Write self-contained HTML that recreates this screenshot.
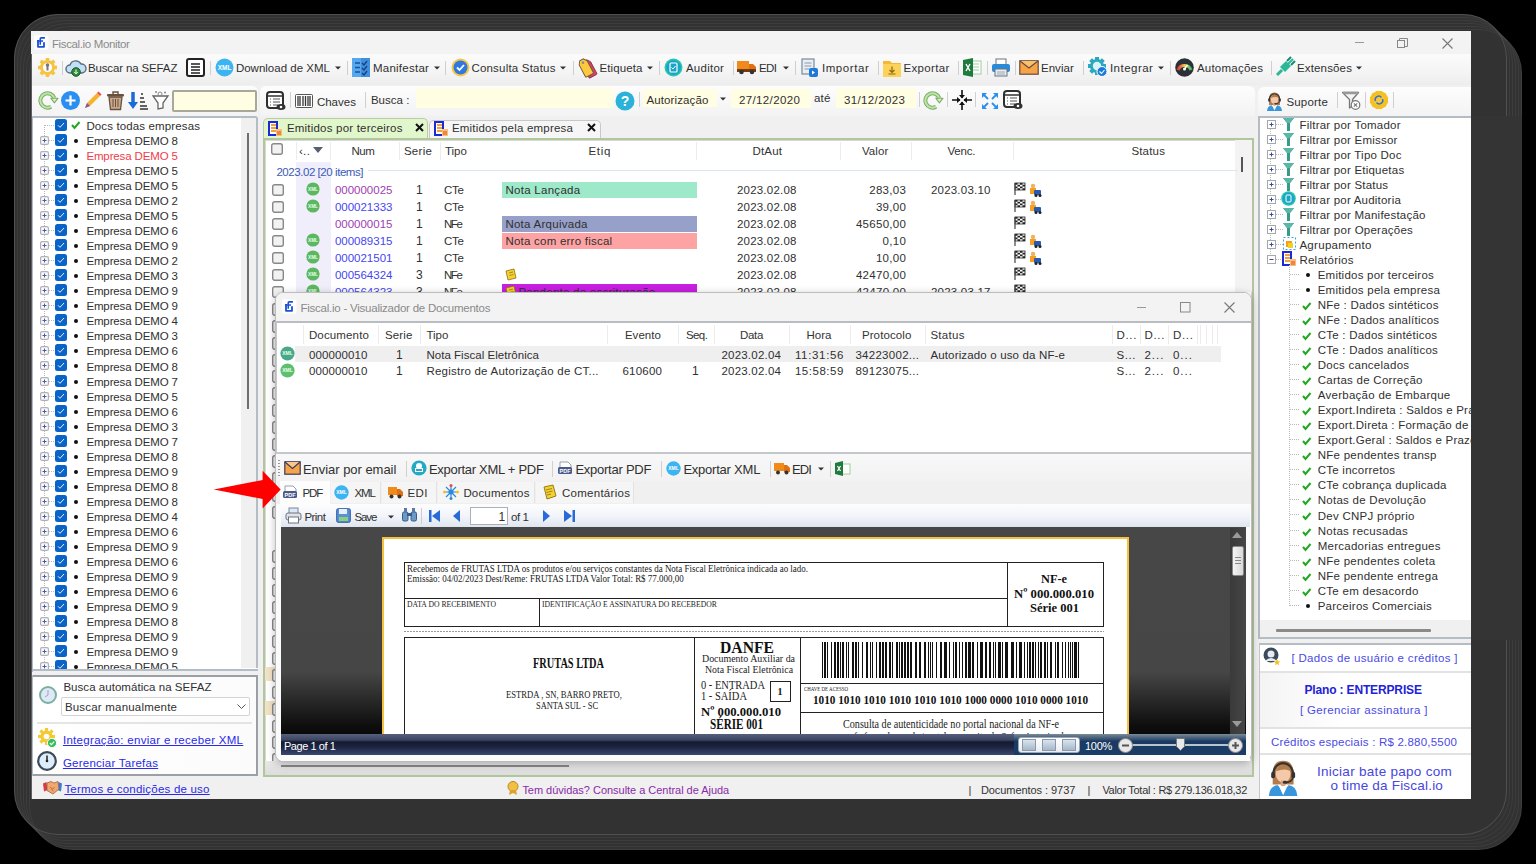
<!DOCTYPE html><html><head><meta charset="utf-8"><style>
*{margin:0;padding:0;box-sizing:border-box}
html,body{width:1536px;height:864px;overflow:hidden;background:#000}
body{position:relative;font-family:"Liberation Sans",sans-serif;font-size:12px;color:#1e1e1e}
.a{position:absolute}
.t{position:absolute;white-space:nowrap}
svg{position:absolute;overflow:visible}
</style></head><body>
<div class="a" style="left:14px;top:14px;width:1493px;height:821px;background:#323232;border-radius:44px"></div>
<div class="a" style="left:17px;top:17px;width:1493px;height:821px;background:#323232;border-radius:44px"></div>
<div class="a" style="left:20px;top:20px;width:1493px;height:821px;background:#323232;border-radius:44px"></div>
<div class="a" style="left:23px;top:23px;width:1493px;height:821px;background:#323232;border-radius:44px"></div>
<div class="a" style="left:26px;top:26px;width:1493px;height:821px;background:#323232;border-radius:44px"></div>
<div class="a" style="left:29px;top:29px;width:1493px;height:821px;background:#323232;border-radius:44px"></div>
<div class="a" style="left:14px;top:14px;width:1493px;height:821px;border:1px solid rgba(110,110,110,.5);border-radius:44px"></div>
<div class="a" style="left:17px;top:17px;width:1493px;height:821px;border:1px solid rgba(90,90,90,.28);border-radius:44px"></div>
<div class="a" style="left:20px;top:20px;width:1493px;height:821px;border:1px solid rgba(90,90,90,.28);border-radius:44px"></div>
<div class="a" style="left:23px;top:23px;width:1493px;height:821px;border:1px solid rgba(90,90,90,.28);border-radius:44px"></div>
<div class="a" style="left:26px;top:26px;width:1493px;height:821px;border:1px solid rgba(90,90,90,.28);border-radius:44px"></div>
<div class="a" style="left:29px;top:29px;width:1493px;height:821px;border:1px solid rgba(90,90,90,.28);border-radius:44px"></div>
<div class="a" style="left:31px;top:31px;width:1440px;height:768px;background:#f0f0f0"></div>
<div class="a" style="left:31px;top:31px;width:1440px;height:23px;background:#f3f3f3"></div>
<svg style="left:33px;top:34px" width="16" height="17" viewBox="0 0 16 17"><rect x="1" y="1.2" width="14.4" height="14.6" rx="2" fill="#fff"/><path d="M5 6V12.8H11V8.3" stroke="#1a4fd8" stroke-width="1.8" fill="none" stroke-linejoin="round"/><path d="M7.25 10.8V4.8Q7.25 3.9 8.2 3.9H11.9M4 7H10" stroke="#1a4fd8" stroke-width="1.6" fill="none"/></svg>
<div class="t" style="left:51.9px;top:37.0px;font-size:11.5px;line-height:14px;color:#8a8a8a;letter-spacing:-0.356px;">Fiscal.io Monitor</div>
<div class="a" style="left:1355px;top:42px;width:9px;height:1px;background:#999"></div>
<svg style="left:1397px;top:38px" width="11" height="10" viewBox="0 0 11 10"><rect x="0.5" y="2.5" width="7" height="7" fill="none" stroke="#888"/><path d="M2.5 2.5V0.5H10.5V8.5H8" fill="none" stroke="#888"/></svg>
<svg style="left:1442px;top:38px" width="11" height="11" viewBox="0 0 11 11"><path d="M0.5 0.5L10.5 10.5M10.5 0.5L0.5 10.5" stroke="#777" stroke-width="1.1"/></svg>
<div class="a" style="left:31px;top:54px;width:1440px;height:31px;background:linear-gradient(#fbfbfb,#f4f4f4 60%,#ededed)"></div>
<svg style="left:38px;top:58px" width="19" height="19" viewBox="0 0 19 19"><g transform="translate(9.5 9.5)"><circle r="7.5" fill="#f6c343"/><rect x="-1.8" y="-9.5" width="3.6" height="4" fill="#f6c343" transform="rotate(0)"/><rect x="-1.8" y="-9.5" width="3.6" height="4" fill="#f6c343" transform="rotate(45)"/><rect x="-1.8" y="-9.5" width="3.6" height="4" fill="#f6c343" transform="rotate(90)"/><rect x="-1.8" y="-9.5" width="3.6" height="4" fill="#f6c343" transform="rotate(135)"/><rect x="-1.8" y="-9.5" width="3.6" height="4" fill="#f6c343" transform="rotate(180)"/><rect x="-1.8" y="-9.5" width="3.6" height="4" fill="#f6c343" transform="rotate(225)"/><rect x="-1.8" y="-9.5" width="3.6" height="4" fill="#f6c343" transform="rotate(270)"/><rect x="-1.8" y="-9.5" width="3.6" height="4" fill="#f6c343" transform="rotate(315)"/><circle r="4.6" fill="#fff"/><path d="M-1 -3h2v6h-2z" fill="#777"/><circle cy="-2.5" r="1.8" fill="#777"/></g></svg>
<div class="a" style="left:62px;top:61px;width:1px;height:14px;background:#cfcfcf"></div>
<svg style="left:66px;top:58px" width="20" height="19" viewBox="0 0 20 19"><path d="M4 15a4 4 0 0 1 0-8a6 6 0 0 1 11-1a4.5 4.5 0 0 1 1 9z" fill="#bfe0f7" stroke="#5a6b7a" stroke-width="1.4"/><circle cx="10" cy="14" r="4.3" fill="#2f8a3c" stroke="#175a22" stroke-width="1"/><path d="M10 11.5v4M8.3 14l1.7 1.8 1.7-1.8" stroke="#fff" stroke-width="1" fill="none"/></svg>
<div class="t" style="left:87.9px;top:61.0px;font-size:11.5px;line-height:14px;color:#303030;letter-spacing:-0.134px;">Buscar na SEFAZ</div>
<svg style="left:186px;top:58px" width="19" height="19" viewBox="0 0 19 19"><rect x="1" y="1" width="17" height="17" rx="2" fill="#fff" stroke="#222" stroke-width="2"/><path d="M5 6h9M5 9h9M5 12h9M5 15h9" stroke="#222" stroke-width="1.6"/></svg>
<div class="a" style="left:210px;top:61px;width:1px;height:14px;background:#cfcfcf"></div>
<svg style="left:215px;top:58px" width="19" height="19" viewBox="0 0 19 19"><circle cx="9.5" cy="9.5" r="9" fill="#3cb4f2"/><text x="9.5" y="12" font-size="6.5" font-family="Liberation Sans" font-weight="bold" fill="#fff" text-anchor="middle">XML</text></svg>
<div class="t" style="left:235.9px;top:61.0px;font-size:11.5px;line-height:14px;color:#303030;letter-spacing:0.004px;">Download de XML</div>
<svg style="left:335px;top:65.5px" width="6" height="4" viewBox="0 0 6 4"><path d="M0 0.5H6L3 3.5Z" fill="#333"/></svg>
<div class="a" style="left:347px;top:61px;width:1px;height:14px;background:#cfcfcf"></div>
<svg style="left:352px;top:58px" width="18" height="19" viewBox="0 0 18 19"><rect x="0" y="0" width="18" height="19" fill="#56a8ee"/><rect x="9" y="0" width="9" height="19" fill="#3d8fe0"/><path d="M3 5h5M3 9.5h5M3 14h5" stroke="#1c4f9a" stroke-width="1.5"/><path d="M10 5l2 2 3-4M10 10l2 2 3-4M10 15l2 2 3-4" stroke="#1c3f7a" stroke-width="1.3" fill="none"/></svg>
<div class="t" style="left:372.9px;top:61.0px;font-size:11.5px;line-height:14px;color:#303030;letter-spacing:0.260px;">Manifestar</div>
<svg style="left:434px;top:65.5px" width="6" height="4" viewBox="0 0 6 4"><path d="M0 0.5H6L3 3.5Z" fill="#333"/></svg>
<div class="a" style="left:445px;top:61px;width:1px;height:14px;background:#cfcfcf"></div>
<svg style="left:451px;top:58px" width="19" height="19" viewBox="0 0 19 19"><circle cx="9.5" cy="9.5" r="9" fill="#f5c84a"/><circle cx="9.5" cy="9.5" r="7" fill="#2f78e0"/><path d="M6 9.5l2.5 2.5 4.5-5" stroke="#fff" stroke-width="1.8" fill="none"/></svg>
<div class="t" style="left:471.4px;top:61.0px;font-size:11.5px;line-height:14px;color:#303030;letter-spacing:0.204px;">Consulta Status</div>
<svg style="left:560px;top:65.5px" width="6" height="4" viewBox="0 0 6 4"><path d="M0 0.5H6L3 3.5Z" fill="#333"/></svg>
<div class="a" style="left:573px;top:61px;width:1px;height:14px;background:#cfcfcf"></div>
<svg style="left:577px;top:57px" width="21" height="22" viewBox="0 0 21 22"><g transform="translate(12 11.3) rotate(-28)"><path d="M-4.5 -5L-2 -8.5H2L4.5 -5V8Q4.5 9 3.5 9H-3.5Q-4.5 9 -4.5 8Z" fill="#d8406a" stroke="#7a2a40" stroke-width="0.8"/></g><g transform="translate(8.5 10.3) rotate(-28)"><path d="M-4.5 -5L-2 -8.5H2L4.5 -5V8Q4.5 9 3.5 9H-3.5Q-4.5 9 -4.5 8Z" fill="#fcc840" stroke="#6a5a30" stroke-width="0.9"/><circle cx="0" cy="-5.3" r="1.3" fill="#8a8a8a"/></g></svg>
<div class="t" style="left:599.4px;top:61.0px;font-size:11.5px;line-height:14px;color:#303030;letter-spacing:0.118px;">Etiqueta</div>
<svg style="left:647px;top:65.5px" width="6" height="4" viewBox="0 0 6 4"><path d="M0 0.5H6L3 3.5Z" fill="#333"/></svg>
<div class="a" style="left:659px;top:61px;width:1px;height:14px;background:#cfcfcf"></div>
<svg style="left:664px;top:58px" width="19" height="19" viewBox="0 0 19 19"><circle cx="9.5" cy="9.5" r="9" fill="#26c9a8"/><circle cx="9.5" cy="9.5" r="7.4" fill="#1aa5c8"/><rect x="6" y="5" width="7" height="9" rx="1" fill="none" stroke="#fff" stroke-width="1.2"/><path d="M7.5 9.5l1.5 1.5 2.5-3" stroke="#fff" stroke-width="1" fill="none"/></svg>
<div class="t" style="left:685.9px;top:61.0px;font-size:11.5px;line-height:14px;color:#303030;letter-spacing:0.263px;">Auditor</div>
<div class="a" style="left:733px;top:61px;width:1px;height:14px;background:#cfcfcf"></div>
<svg style="left:737px;top:60px" width="20" height="15" viewBox="0 0 20 15"><rect x="0" y="1" width="12" height="9" fill="#f08a1a"/><path d="M12 4h4l3 3v4h-7z" fill="#e07010"/><rect x="0" y="9" width="19" height="3" fill="#7a3a10"/><circle cx="4.5" cy="12" r="2.3" fill="#333"/><circle cx="15" cy="12" r="2.3" fill="#333"/></svg>
<div class="t" style="left:758.9px;top:61.0px;font-size:11.5px;line-height:14px;color:#303030;letter-spacing:-0.586px;">EDI</div>
<svg style="left:783px;top:65.5px" width="6" height="4" viewBox="0 0 6 4"><path d="M0 0.5H6L3 3.5Z" fill="#333"/></svg>
<div class="a" style="left:795px;top:61px;width:1px;height:14px;background:#cfcfcf"></div>
<svg style="left:800px;top:58px" width="19" height="19" viewBox="0 0 19 19"><rect x="2" y="1" width="12" height="15" fill="#e8eef4" stroke="#7a8a9a" stroke-width="1.2"/><path d="M4.5 5h7M4.5 8h7M4.5 11h5" stroke="#8a9aaa" stroke-width="1"/><rect x="9" y="10" width="9" height="9" rx="2" fill="#1e7ad8"/><path d="M12 12.5l3 2-3 2z" fill="#fff"/></svg>
<div class="t" style="left:821.9px;top:61.0px;font-size:11.5px;line-height:14px;color:#303030;letter-spacing:0.603px;">Importar</div>
<div class="a" style="left:878px;top:61px;width:1px;height:14px;background:#cfcfcf"></div>
<svg style="left:883px;top:58px" width="18" height="19" viewBox="0 0 18 19"><path d="M0 3h7l2 2h9v14H0z" fill="#f5b82e"/><rect x="0" y="6" width="18" height="13" fill="#fcd25a"/><path d="M9 8.5v6M6.5 12l2.5 2.5 2.5-2.5M5.5 16h7" stroke="#8a6a10" stroke-width="1.2" fill="none"/></svg>
<div class="t" style="left:903.4px;top:61.0px;font-size:11.5px;line-height:14px;color:#303030;letter-spacing:0.366px;">Exportar</div>
<div class="a" style="left:958px;top:61px;width:1px;height:14px;background:#cfcfcf"></div>
<svg style="left:963px;top:58px" width="19" height="19" viewBox="0 0 19 19"><rect x="7" y="3" width="11" height="13" fill="#fff" stroke="#9ccf9c"/><path d="M9 6h7M9 9h7M9 12h7" stroke="#9ccf9c"/><path d="M0 2l10-2v19L0 17z" fill="#1f7a3e"/><path d="M3 6l4 7M7 6l-4 7" stroke="#fff" stroke-width="1.4"/></svg>
<div class="a" style="left:987px;top:61px;width:1px;height:14px;background:#cfcfcf"></div>
<svg style="left:991px;top:58px" width="20" height="19" viewBox="0 0 20 19"><rect x="5" y="1" width="10" height="6" fill="#fff" stroke="#6a7480"/><rect x="1" y="6" width="18" height="8" rx="2" fill="#2a8ad8"/><rect x="4" y="11" width="12" height="7" fill="#e8ecf0" stroke="#6a7480"/><path d="M6 14h8M6 16h8" stroke="#8a9aa8" stroke-width="0.8"/></svg>
<div class="a" style="left:1015px;top:61px;width:1px;height:14px;background:#cfcfcf"></div>
<svg style="left:1019px;top:60px" width="20" height="15" viewBox="0 0 20 15"><rect x="0.8" y="0.8" width="18.4" height="13.4" fill="#f6a44a" stroke="#6a4a3a" stroke-width="1.2"/><path d="M1 1l9 7 9-7" stroke="#6a4a3a" stroke-width="1.2" fill="#fbc06a"/></svg>
<div class="t" style="left:1040.9px;top:61.0px;font-size:11.5px;line-height:14px;color:#303030;letter-spacing:0.081px;">Enviar</div>
<div class="a" style="left:1083px;top:61px;width:1px;height:14px;background:#cfcfcf"></div>
<svg style="left:1088px;top:57px" width="20" height="20" viewBox="0 0 20 20"><g transform="translate(9 9)"><rect x="-2" y="-9" width="4" height="4" fill="#2aa8c0" transform="rotate(0)"/><rect x="-2" y="-9" width="4" height="4" fill="#2aa8c0" transform="rotate(45)"/><rect x="-2" y="-9" width="4" height="4" fill="#2aa8c0" transform="rotate(90)"/><rect x="-2" y="-9" width="4" height="4" fill="#2aa8c0" transform="rotate(135)"/><rect x="-2" y="-9" width="4" height="4" fill="#2aa8c0" transform="rotate(180)"/><rect x="-2" y="-9" width="4" height="4" fill="#2aa8c0" transform="rotate(225)"/><rect x="-2" y="-9" width="4" height="4" fill="#2aa8c0" transform="rotate(270)"/><rect x="-2" y="-9" width="4" height="4" fill="#2aa8c0" transform="rotate(315)"/><circle r="7" fill="#2aa8c0"/><circle r="4.2" fill="#d8f4f8"/></g><circle cx="14" cy="14.5" r="5" fill="#1a7ad8" stroke="#fff" stroke-width="1"/><path d="M11.5 14.5l2 2 3-3.5" stroke="#fff" stroke-width="1.1" fill="none"/></svg>
<div class="t" style="left:1109.9px;top:61.0px;font-size:11.5px;line-height:14px;color:#303030;letter-spacing:0.487px;">Integrar</div>
<svg style="left:1158px;top:65.5px" width="6" height="4" viewBox="0 0 6 4"><path d="M0 0.5H6L3 3.5Z" fill="#333"/></svg>
<div class="a" style="left:1170px;top:61px;width:1px;height:14px;background:#cfcfcf"></div>
<svg style="left:1175px;top:58px" width="19" height="19" viewBox="0 0 19 19"><circle cx="9.5" cy="9.5" r="9.3" fill="#2a2f38"/><path d="M3 12a7 7 0 0 1 13 0" stroke="url(#gg)" stroke-width="3" fill="none"/><defs><linearGradient id="gg"><stop offset="0" stop-color="#e03a3a"/><stop offset=".5" stop-color="#f5c84a"/><stop offset="1" stop-color="#3ac070"/></linearGradient></defs><path d="M9.5 11l3-4" stroke="#fff" stroke-width="1.4"/><circle cx="9.5" cy="11" r="1.5" fill="#fff"/></svg>
<div class="t" style="left:1196.9px;top:61.0px;font-size:11.5px;line-height:14px;color:#303030;letter-spacing:0.234px;">Automações</div>
<div class="a" style="left:1271px;top:61px;width:1px;height:14px;background:#cfcfcf"></div>
<svg style="left:1275px;top:57px" width="20" height="20" viewBox="0 0 20 20"><path d="M2 18l5-5" stroke="#2ab898" stroke-width="3"/><path d="M5 10l5 5 6-6-5-5z" fill="#2ab898"/><path d="M12 4l4-4M16 8l4-4" stroke="#1a8a70" stroke-width="2"/><path d="M18 2l-5 5" stroke="#2ab898" stroke-width="2"/></svg>
<div class="t" style="left:1296.9px;top:61.0px;font-size:11.5px;line-height:14px;color:#303030;letter-spacing:0.166px;">Extensões</div>
<svg style="left:1356px;top:65.5px" width="6" height="4" viewBox="0 0 6 4"><path d="M0 0.5H6L3 3.5Z" fill="#333"/></svg>
<div class="a" style="left:31px;top:86px;width:227px;height:30px;background:linear-gradient(#fcfcfc,#f3f3f3);border-top-right-radius:6px"></div>
<svg style="left:38px;top:91px" width="20" height="19" viewBox="0 0 20 19"><path d="M13.1 15.7A7.2 7.2 0 1 1 16.3 7" stroke="#7aae68" stroke-width="4" fill="none"/><path d="M13.1 15.7A7.2 7.2 0 1 1 16.3 7" stroke="#c0e4a8" stroke-width="2" fill="none"/><path d="M12.8 7.2H20L16.4 11.8Z" fill="#d8f0c8" stroke="#7aae68" stroke-width="1.1" stroke-linejoin="round"/></svg>
<svg style="left:61px;top:91px" width="19" height="19" viewBox="0 0 19 19"><circle cx="9.5" cy="9.5" r="9.5" fill="#2a8ff0"/><path d="M9.5 4.5v10M4.5 9.5h10" stroke="#fff" stroke-width="2.2"/></svg>
<svg style="left:83px;top:91px" width="19" height="19" viewBox="0 0 19 19"><path d="M2 17l2-5 10-10 3 3-10 10z" fill="#f6b42a"/><path d="M14 2l3 3 1.5-1.5-3-3z" fill="#e84a4a"/><path d="M2 17l2-5 3 3z" fill="#7a5aa8"/></svg>
<svg style="left:107px;top:91px" width="17" height="19" viewBox="0 0 17 19"><rect x="0" y="3" width="17" height="2.5" rx="1" fill="#6a5040"/><path d="M6 3V1h5v2" stroke="#6a5040" fill="none" stroke-width="1.4"/><path d="M2 6h13l-1.5 12.5h-10z" fill="#c8a888" stroke="#6a5040" stroke-width="1.3"/><path d="M6 8v8M8.5 8v8M11 8v8" stroke="#6a5040" stroke-width="1"/></svg>
<svg style="left:128px;top:91px" width="20" height="19" viewBox="0 0 20 19"><path d="M5 1v12" stroke="#1a6ad8" stroke-width="3.5"/><path d="M0 11h10l-5 7z" fill="#1a6ad8"/><path d="M13 3h2M12 7h4M12 11h5M12 15h7M12 18h8" stroke="#333" stroke-width="1.6"/></svg>
<svg style="left:152px;top:90px" width="17" height="20" viewBox="0 0 17 20"><path d="M1 6h15l-5 7v5l-5 1v-6z" fill="#fff" stroke="#666" stroke-width="1.3"/><circle cx="8" cy="4" r="2" fill="none" stroke="#888"/><circle cx="4" cy="2" r="1" fill="#888"/><circle cx="13" cy="2.5" r="1" fill="#888"/></svg>
<div class="a" style="left:172px;top:90px;width:85px;height:22px;background:#fffde2;border:2px solid #a8a89a;border-radius:2px"></div>
<div class="a" style="left:31px;top:116px;width:227px;height:556px;background:#fff;border:2px solid #b4bcc6;border-left:none;border-top-right-radius:3px"></div>
<div class="a" style="left:241px;top:118px;width:15px;height:552px;background:#f0f0f0"></div>
<div class="a" style="left:247px;top:133px;width:2px;height:276px;background:#6e6e6e"></div>
<div class="a" style="left:44px;top:125px;width:1px;height:545px;background:repeating-linear-gradient(#b8b8b8 0 1px,transparent 1px 2px)"></div>
<div class="a" style="left:45px;top:125px;width:10px;height:1px;background:repeating-linear-gradient(90deg,#b8b8b8 0 1px,transparent 1px 2px)"></div>
<svg style="left:55px;top:119px" width="12" height="12" viewBox="0 0 12 12"><rect x="0" y="0" width="12" height="12" rx="2.5" fill="#0a64c8"/><path d="M3 6.3l2 2 4-4.3" stroke="#e8f0ff" stroke-width="1" fill="none"/></svg>
<svg style="left:71px;top:121px" width="9" height="8" viewBox="0 0 9 8"><path d="M1 4l2.5 3 5-6" stroke="#22a822" stroke-width="2" fill="none"/></svg>
<div class="t" style="left:86.4px;top:119.0px;font-size:11.5px;line-height:14px;color:#303030;letter-spacing:0.130px;">Docs todas empresas</div>
<div class="a" style="left:40px;top:668px;width:218px;height:4px;background:#fff"></div>
<svg style="left:40px;top:136px" width="10" height="10" viewBox="0 0 10 10"><rect x="0.6" y="0.6" width="7.8" height="7.8" rx="1.5" fill="#fafafa" stroke="#b0b0b0" stroke-width="1.2"/><path d="M2.5 4.5h4M4.5 2.5v4" stroke="#4a5ab0" stroke-width="1"/></svg>
<div class="a" style="left:49px;top:140px;width:6px;height:1px;background:repeating-linear-gradient(90deg,#b8b8b8 0 1px,transparent 1px 2px)"></div>
<svg style="left:55px;top:134px" width="12" height="12" viewBox="0 0 12 12"><rect x="0" y="0" width="12" height="12" rx="2.5" fill="#0a64c8"/><path d="M3 6.3l2 2 4-4.3" stroke="#e8f0ff" stroke-width="1" fill="none"/></svg>
<div class="a" style="left:73.5px;top:138.5px;width:4.0px;height:4.0px;background:#111;border-radius:50%"></div>
<div class="t" style="left:86.4px;top:134.0px;font-size:11.5px;line-height:14px;color:#303030;letter-spacing:-0.136px;">Empresa DEMO 8</div>
<svg style="left:40px;top:151px" width="10" height="10" viewBox="0 0 10 10"><rect x="0.6" y="0.6" width="7.8" height="7.8" rx="1.5" fill="#fafafa" stroke="#b0b0b0" stroke-width="1.2"/><path d="M2.5 4.5h4M4.5 2.5v4" stroke="#4a5ab0" stroke-width="1"/></svg>
<div class="a" style="left:49px;top:155px;width:6px;height:1px;background:repeating-linear-gradient(90deg,#b8b8b8 0 1px,transparent 1px 2px)"></div>
<svg style="left:55px;top:149px" width="12" height="12" viewBox="0 0 12 12"><rect x="0" y="0" width="12" height="12" rx="2.5" fill="#0a64c8"/><path d="M3 6.3l2 2 4-4.3" stroke="#e8f0ff" stroke-width="1" fill="none"/></svg>
<div class="a" style="left:73.5px;top:153.5px;width:4.0px;height:4.0px;background:#111;border-radius:50%"></div>
<div class="t" style="left:86.4px;top:149.1px;font-size:11.5px;line-height:14px;color:#f03c4a;letter-spacing:-0.136px;">Empresa DEMO 5</div>
<svg style="left:40px;top:166px" width="10" height="10" viewBox="0 0 10 10"><rect x="0.6" y="0.6" width="7.8" height="7.8" rx="1.5" fill="#fafafa" stroke="#b0b0b0" stroke-width="1.2"/><path d="M2.5 4.5h4M4.5 2.5v4" stroke="#4a5ab0" stroke-width="1"/></svg>
<div class="a" style="left:49px;top:170px;width:6px;height:1px;background:repeating-linear-gradient(90deg,#b8b8b8 0 1px,transparent 1px 2px)"></div>
<svg style="left:55px;top:164px" width="12" height="12" viewBox="0 0 12 12"><rect x="0" y="0" width="12" height="12" rx="2.5" fill="#0a64c8"/><path d="M3 6.3l2 2 4-4.3" stroke="#e8f0ff" stroke-width="1" fill="none"/></svg>
<div class="a" style="left:73.5px;top:168.5px;width:4.0px;height:4.0px;background:#111;border-radius:50%"></div>
<div class="t" style="left:86.4px;top:164.1px;font-size:11.5px;line-height:14px;color:#303030;letter-spacing:-0.136px;">Empresa DEMO 5</div>
<svg style="left:40px;top:181px" width="10" height="10" viewBox="0 0 10 10"><rect x="0.6" y="0.6" width="7.8" height="7.8" rx="1.5" fill="#fafafa" stroke="#b0b0b0" stroke-width="1.2"/><path d="M2.5 4.5h4M4.5 2.5v4" stroke="#4a5ab0" stroke-width="1"/></svg>
<div class="a" style="left:49px;top:185px;width:6px;height:1px;background:repeating-linear-gradient(90deg,#b8b8b8 0 1px,transparent 1px 2px)"></div>
<svg style="left:55px;top:179px" width="12" height="12" viewBox="0 0 12 12"><rect x="0" y="0" width="12" height="12" rx="2.5" fill="#0a64c8"/><path d="M3 6.3l2 2 4-4.3" stroke="#e8f0ff" stroke-width="1" fill="none"/></svg>
<div class="a" style="left:73.5px;top:183.5px;width:4.0px;height:4.0px;background:#111;border-radius:50%"></div>
<div class="t" style="left:86.4px;top:179.1px;font-size:11.5px;line-height:14px;color:#303030;letter-spacing:-0.136px;">Empresa DEMO 5</div>
<svg style="left:40px;top:196px" width="10" height="10" viewBox="0 0 10 10"><rect x="0.6" y="0.6" width="7.8" height="7.8" rx="1.5" fill="#fafafa" stroke="#b0b0b0" stroke-width="1.2"/><path d="M2.5 4.5h4M4.5 2.5v4" stroke="#4a5ab0" stroke-width="1"/></svg>
<div class="a" style="left:49px;top:200px;width:6px;height:1px;background:repeating-linear-gradient(90deg,#b8b8b8 0 1px,transparent 1px 2px)"></div>
<svg style="left:55px;top:194px" width="12" height="12" viewBox="0 0 12 12"><rect x="0" y="0" width="12" height="12" rx="2.5" fill="#0a64c8"/><path d="M3 6.3l2 2 4-4.3" stroke="#e8f0ff" stroke-width="1" fill="none"/></svg>
<div class="a" style="left:73.5px;top:198.5px;width:4.0px;height:4.0px;background:#111;border-radius:50%"></div>
<div class="t" style="left:86.4px;top:194.1px;font-size:11.5px;line-height:14px;color:#303030;letter-spacing:-0.136px;">Empresa DEMO 2</div>
<svg style="left:40px;top:211px" width="10" height="10" viewBox="0 0 10 10"><rect x="0.6" y="0.6" width="7.8" height="7.8" rx="1.5" fill="#fafafa" stroke="#b0b0b0" stroke-width="1.2"/><path d="M2.5 4.5h4M4.5 2.5v4" stroke="#4a5ab0" stroke-width="1"/></svg>
<div class="a" style="left:49px;top:215px;width:6px;height:1px;background:repeating-linear-gradient(90deg,#b8b8b8 0 1px,transparent 1px 2px)"></div>
<svg style="left:55px;top:209px" width="12" height="12" viewBox="0 0 12 12"><rect x="0" y="0" width="12" height="12" rx="2.5" fill="#0a64c8"/><path d="M3 6.3l2 2 4-4.3" stroke="#e8f0ff" stroke-width="1" fill="none"/></svg>
<div class="a" style="left:73.5px;top:213.5px;width:4.0px;height:4.0px;background:#111;border-radius:50%"></div>
<div class="t" style="left:86.4px;top:209.2px;font-size:11.5px;line-height:14px;color:#303030;letter-spacing:-0.136px;">Empresa DEMO 5</div>
<svg style="left:40px;top:226px" width="10" height="10" viewBox="0 0 10 10"><rect x="0.6" y="0.6" width="7.8" height="7.8" rx="1.5" fill="#fafafa" stroke="#b0b0b0" stroke-width="1.2"/><path d="M2.5 4.5h4M4.5 2.5v4" stroke="#4a5ab0" stroke-width="1"/></svg>
<div class="a" style="left:49px;top:230px;width:6px;height:1px;background:repeating-linear-gradient(90deg,#b8b8b8 0 1px,transparent 1px 2px)"></div>
<svg style="left:55px;top:224px" width="12" height="12" viewBox="0 0 12 12"><rect x="0" y="0" width="12" height="12" rx="2.5" fill="#0a64c8"/><path d="M3 6.3l2 2 4-4.3" stroke="#e8f0ff" stroke-width="1" fill="none"/></svg>
<div class="a" style="left:73.5px;top:228.5px;width:4.0px;height:4.0px;background:#111;border-radius:50%"></div>
<div class="t" style="left:86.4px;top:224.2px;font-size:11.5px;line-height:14px;color:#303030;letter-spacing:-0.136px;">Empresa DEMO 6</div>
<svg style="left:40px;top:241px" width="10" height="10" viewBox="0 0 10 10"><rect x="0.6" y="0.6" width="7.8" height="7.8" rx="1.5" fill="#fafafa" stroke="#b0b0b0" stroke-width="1.2"/><path d="M2.5 4.5h4M4.5 2.5v4" stroke="#4a5ab0" stroke-width="1"/></svg>
<div class="a" style="left:49px;top:245px;width:6px;height:1px;background:repeating-linear-gradient(90deg,#b8b8b8 0 1px,transparent 1px 2px)"></div>
<svg style="left:55px;top:239px" width="12" height="12" viewBox="0 0 12 12"><rect x="0" y="0" width="12" height="12" rx="2.5" fill="#0a64c8"/><path d="M3 6.3l2 2 4-4.3" stroke="#e8f0ff" stroke-width="1" fill="none"/></svg>
<div class="a" style="left:73.5px;top:243.5px;width:4.0px;height:4.0px;background:#111;border-radius:50%"></div>
<div class="t" style="left:86.4px;top:239.2px;font-size:11.5px;line-height:14px;color:#303030;letter-spacing:-0.136px;">Empresa DEMO 9</div>
<svg style="left:40px;top:256px" width="10" height="10" viewBox="0 0 10 10"><rect x="0.6" y="0.6" width="7.8" height="7.8" rx="1.5" fill="#fafafa" stroke="#b0b0b0" stroke-width="1.2"/><path d="M2.5 4.5h4M4.5 2.5v4" stroke="#4a5ab0" stroke-width="1"/></svg>
<div class="a" style="left:49px;top:260px;width:6px;height:1px;background:repeating-linear-gradient(90deg,#b8b8b8 0 1px,transparent 1px 2px)"></div>
<svg style="left:55px;top:254px" width="12" height="12" viewBox="0 0 12 12"><rect x="0" y="0" width="12" height="12" rx="2.5" fill="#0a64c8"/><path d="M3 6.3l2 2 4-4.3" stroke="#e8f0ff" stroke-width="1" fill="none"/></svg>
<div class="a" style="left:73.5px;top:258.5px;width:4.0px;height:4.0px;background:#111;border-radius:50%"></div>
<div class="t" style="left:86.4px;top:254.3px;font-size:11.5px;line-height:14px;color:#303030;letter-spacing:-0.136px;">Empresa DEMO 2</div>
<svg style="left:40px;top:271px" width="10" height="10" viewBox="0 0 10 10"><rect x="0.6" y="0.6" width="7.8" height="7.8" rx="1.5" fill="#fafafa" stroke="#b0b0b0" stroke-width="1.2"/><path d="M2.5 4.5h4M4.5 2.5v4" stroke="#4a5ab0" stroke-width="1"/></svg>
<div class="a" style="left:49px;top:275px;width:6px;height:1px;background:repeating-linear-gradient(90deg,#b8b8b8 0 1px,transparent 1px 2px)"></div>
<svg style="left:55px;top:269px" width="12" height="12" viewBox="0 0 12 12"><rect x="0" y="0" width="12" height="12" rx="2.5" fill="#0a64c8"/><path d="M3 6.3l2 2 4-4.3" stroke="#e8f0ff" stroke-width="1" fill="none"/></svg>
<div class="a" style="left:73.5px;top:273.5px;width:4.0px;height:4.0px;background:#111;border-radius:50%"></div>
<div class="t" style="left:86.4px;top:269.3px;font-size:11.5px;line-height:14px;color:#303030;letter-spacing:-0.136px;">Empresa DEMO 3</div>
<svg style="left:40px;top:286px" width="10" height="10" viewBox="0 0 10 10"><rect x="0.6" y="0.6" width="7.8" height="7.8" rx="1.5" fill="#fafafa" stroke="#b0b0b0" stroke-width="1.2"/><path d="M2.5 4.5h4M4.5 2.5v4" stroke="#4a5ab0" stroke-width="1"/></svg>
<div class="a" style="left:49px;top:290px;width:6px;height:1px;background:repeating-linear-gradient(90deg,#b8b8b8 0 1px,transparent 1px 2px)"></div>
<svg style="left:55px;top:284px" width="12" height="12" viewBox="0 0 12 12"><rect x="0" y="0" width="12" height="12" rx="2.5" fill="#0a64c8"/><path d="M3 6.3l2 2 4-4.3" stroke="#e8f0ff" stroke-width="1" fill="none"/></svg>
<div class="a" style="left:73.5px;top:288.5px;width:4.0px;height:4.0px;background:#111;border-radius:50%"></div>
<div class="t" style="left:86.4px;top:284.3px;font-size:11.5px;line-height:14px;color:#303030;letter-spacing:-0.136px;">Empresa DEMO 9</div>
<svg style="left:40px;top:301px" width="10" height="10" viewBox="0 0 10 10"><rect x="0.6" y="0.6" width="7.8" height="7.8" rx="1.5" fill="#fafafa" stroke="#b0b0b0" stroke-width="1.2"/><path d="M2.5 4.5h4M4.5 2.5v4" stroke="#4a5ab0" stroke-width="1"/></svg>
<div class="a" style="left:49px;top:305px;width:6px;height:1px;background:repeating-linear-gradient(90deg,#b8b8b8 0 1px,transparent 1px 2px)"></div>
<svg style="left:55px;top:299px" width="12" height="12" viewBox="0 0 12 12"><rect x="0" y="0" width="12" height="12" rx="2.5" fill="#0a64c8"/><path d="M3 6.3l2 2 4-4.3" stroke="#e8f0ff" stroke-width="1" fill="none"/></svg>
<div class="a" style="left:73.5px;top:303.5px;width:4.0px;height:4.0px;background:#111;border-radius:50%"></div>
<div class="t" style="left:86.4px;top:299.4px;font-size:11.5px;line-height:14px;color:#303030;letter-spacing:-0.136px;">Empresa DEMO 9</div>
<svg style="left:40px;top:316px" width="10" height="10" viewBox="0 0 10 10"><rect x="0.6" y="0.6" width="7.8" height="7.8" rx="1.5" fill="#fafafa" stroke="#b0b0b0" stroke-width="1.2"/><path d="M2.5 4.5h4M4.5 2.5v4" stroke="#4a5ab0" stroke-width="1"/></svg>
<div class="a" style="left:49px;top:320px;width:6px;height:1px;background:repeating-linear-gradient(90deg,#b8b8b8 0 1px,transparent 1px 2px)"></div>
<svg style="left:55px;top:314px" width="12" height="12" viewBox="0 0 12 12"><rect x="0" y="0" width="12" height="12" rx="2.5" fill="#0a64c8"/><path d="M3 6.3l2 2 4-4.3" stroke="#e8f0ff" stroke-width="1" fill="none"/></svg>
<div class="a" style="left:73.5px;top:318.5px;width:4.0px;height:4.0px;background:#111;border-radius:50%"></div>
<div class="t" style="left:86.4px;top:314.4px;font-size:11.5px;line-height:14px;color:#303030;letter-spacing:-0.136px;">Empresa DEMO 4</div>
<svg style="left:40px;top:331px" width="10" height="10" viewBox="0 0 10 10"><rect x="0.6" y="0.6" width="7.8" height="7.8" rx="1.5" fill="#fafafa" stroke="#b0b0b0" stroke-width="1.2"/><path d="M2.5 4.5h4M4.5 2.5v4" stroke="#4a5ab0" stroke-width="1"/></svg>
<div class="a" style="left:49px;top:335px;width:6px;height:1px;background:repeating-linear-gradient(90deg,#b8b8b8 0 1px,transparent 1px 2px)"></div>
<svg style="left:55px;top:329px" width="12" height="12" viewBox="0 0 12 12"><rect x="0" y="0" width="12" height="12" rx="2.5" fill="#0a64c8"/><path d="M3 6.3l2 2 4-4.3" stroke="#e8f0ff" stroke-width="1" fill="none"/></svg>
<div class="a" style="left:73.5px;top:333.5px;width:4.0px;height:4.0px;background:#111;border-radius:50%"></div>
<div class="t" style="left:86.4px;top:329.4px;font-size:11.5px;line-height:14px;color:#303030;letter-spacing:-0.136px;">Empresa DEMO 3</div>
<svg style="left:40px;top:346px" width="10" height="10" viewBox="0 0 10 10"><rect x="0.6" y="0.6" width="7.8" height="7.8" rx="1.5" fill="#fafafa" stroke="#b0b0b0" stroke-width="1.2"/><path d="M2.5 4.5h4M4.5 2.5v4" stroke="#4a5ab0" stroke-width="1"/></svg>
<div class="a" style="left:49px;top:350px;width:6px;height:1px;background:repeating-linear-gradient(90deg,#b8b8b8 0 1px,transparent 1px 2px)"></div>
<svg style="left:55px;top:344px" width="12" height="12" viewBox="0 0 12 12"><rect x="0" y="0" width="12" height="12" rx="2.5" fill="#0a64c8"/><path d="M3 6.3l2 2 4-4.3" stroke="#e8f0ff" stroke-width="1" fill="none"/></svg>
<div class="a" style="left:73.5px;top:348.5px;width:4.0px;height:4.0px;background:#111;border-radius:50%"></div>
<div class="t" style="left:86.4px;top:344.4px;font-size:11.5px;line-height:14px;color:#303030;letter-spacing:-0.136px;">Empresa DEMO 6</div>
<svg style="left:40px;top:361px" width="10" height="10" viewBox="0 0 10 10"><rect x="0.6" y="0.6" width="7.8" height="7.8" rx="1.5" fill="#fafafa" stroke="#b0b0b0" stroke-width="1.2"/><path d="M2.5 4.5h4M4.5 2.5v4" stroke="#4a5ab0" stroke-width="1"/></svg>
<div class="a" style="left:49px;top:365px;width:6px;height:1px;background:repeating-linear-gradient(90deg,#b8b8b8 0 1px,transparent 1px 2px)"></div>
<svg style="left:55px;top:359px" width="12" height="12" viewBox="0 0 12 12"><rect x="0" y="0" width="12" height="12" rx="2.5" fill="#0a64c8"/><path d="M3 6.3l2 2 4-4.3" stroke="#e8f0ff" stroke-width="1" fill="none"/></svg>
<div class="a" style="left:73.5px;top:363.5px;width:4.0px;height:4.0px;background:#111;border-radius:50%"></div>
<div class="t" style="left:86.4px;top:359.5px;font-size:11.5px;line-height:14px;color:#303030;letter-spacing:-0.136px;">Empresa DEMO 8</div>
<svg style="left:40px;top:377px" width="10" height="10" viewBox="0 0 10 10"><rect x="0.6" y="0.6" width="7.8" height="7.8" rx="1.5" fill="#fafafa" stroke="#b0b0b0" stroke-width="1.2"/><path d="M2.5 4.5h4M4.5 2.5v4" stroke="#4a5ab0" stroke-width="1"/></svg>
<div class="a" style="left:49px;top:381px;width:6px;height:1px;background:repeating-linear-gradient(90deg,#b8b8b8 0 1px,transparent 1px 2px)"></div>
<svg style="left:55px;top:375px" width="12" height="12" viewBox="0 0 12 12"><rect x="0" y="0" width="12" height="12" rx="2.5" fill="#0a64c8"/><path d="M3 6.3l2 2 4-4.3" stroke="#e8f0ff" stroke-width="1" fill="none"/></svg>
<div class="a" style="left:73.5px;top:379.5px;width:4.0px;height:4.0px;background:#111;border-radius:50%"></div>
<div class="t" style="left:86.4px;top:374.5px;font-size:11.5px;line-height:14px;color:#303030;letter-spacing:-0.136px;">Empresa DEMO 7</div>
<svg style="left:40px;top:392px" width="10" height="10" viewBox="0 0 10 10"><rect x="0.6" y="0.6" width="7.8" height="7.8" rx="1.5" fill="#fafafa" stroke="#b0b0b0" stroke-width="1.2"/><path d="M2.5 4.5h4M4.5 2.5v4" stroke="#4a5ab0" stroke-width="1"/></svg>
<div class="a" style="left:49px;top:396px;width:6px;height:1px;background:repeating-linear-gradient(90deg,#b8b8b8 0 1px,transparent 1px 2px)"></div>
<svg style="left:55px;top:390px" width="12" height="12" viewBox="0 0 12 12"><rect x="0" y="0" width="12" height="12" rx="2.5" fill="#0a64c8"/><path d="M3 6.3l2 2 4-4.3" stroke="#e8f0ff" stroke-width="1" fill="none"/></svg>
<div class="a" style="left:73.5px;top:394.5px;width:4.0px;height:4.0px;background:#111;border-radius:50%"></div>
<div class="t" style="left:86.4px;top:389.5px;font-size:11.5px;line-height:14px;color:#303030;letter-spacing:-0.136px;">Empresa DEMO 5</div>
<svg style="left:40px;top:407px" width="10" height="10" viewBox="0 0 10 10"><rect x="0.6" y="0.6" width="7.8" height="7.8" rx="1.5" fill="#fafafa" stroke="#b0b0b0" stroke-width="1.2"/><path d="M2.5 4.5h4M4.5 2.5v4" stroke="#4a5ab0" stroke-width="1"/></svg>
<div class="a" style="left:49px;top:411px;width:6px;height:1px;background:repeating-linear-gradient(90deg,#b8b8b8 0 1px,transparent 1px 2px)"></div>
<svg style="left:55px;top:405px" width="12" height="12" viewBox="0 0 12 12"><rect x="0" y="0" width="12" height="12" rx="2.5" fill="#0a64c8"/><path d="M3 6.3l2 2 4-4.3" stroke="#e8f0ff" stroke-width="1" fill="none"/></svg>
<div class="a" style="left:73.5px;top:409.5px;width:4.0px;height:4.0px;background:#111;border-radius:50%"></div>
<div class="t" style="left:86.4px;top:404.6px;font-size:11.5px;line-height:14px;color:#303030;letter-spacing:-0.136px;">Empresa DEMO 6</div>
<svg style="left:40px;top:422px" width="10" height="10" viewBox="0 0 10 10"><rect x="0.6" y="0.6" width="7.8" height="7.8" rx="1.5" fill="#fafafa" stroke="#b0b0b0" stroke-width="1.2"/><path d="M2.5 4.5h4M4.5 2.5v4" stroke="#4a5ab0" stroke-width="1"/></svg>
<div class="a" style="left:49px;top:426px;width:6px;height:1px;background:repeating-linear-gradient(90deg,#b8b8b8 0 1px,transparent 1px 2px)"></div>
<svg style="left:55px;top:420px" width="12" height="12" viewBox="0 0 12 12"><rect x="0" y="0" width="12" height="12" rx="2.5" fill="#0a64c8"/><path d="M3 6.3l2 2 4-4.3" stroke="#e8f0ff" stroke-width="1" fill="none"/></svg>
<div class="a" style="left:73.5px;top:424.5px;width:4.0px;height:4.0px;background:#111;border-radius:50%"></div>
<div class="t" style="left:86.4px;top:419.6px;font-size:11.5px;line-height:14px;color:#303030;letter-spacing:-0.136px;">Empresa DEMO 3</div>
<svg style="left:40px;top:437px" width="10" height="10" viewBox="0 0 10 10"><rect x="0.6" y="0.6" width="7.8" height="7.8" rx="1.5" fill="#fafafa" stroke="#b0b0b0" stroke-width="1.2"/><path d="M2.5 4.5h4M4.5 2.5v4" stroke="#4a5ab0" stroke-width="1"/></svg>
<div class="a" style="left:49px;top:441px;width:6px;height:1px;background:repeating-linear-gradient(90deg,#b8b8b8 0 1px,transparent 1px 2px)"></div>
<svg style="left:55px;top:435px" width="12" height="12" viewBox="0 0 12 12"><rect x="0" y="0" width="12" height="12" rx="2.5" fill="#0a64c8"/><path d="M3 6.3l2 2 4-4.3" stroke="#e8f0ff" stroke-width="1" fill="none"/></svg>
<div class="a" style="left:73.5px;top:439.5px;width:4.0px;height:4.0px;background:#111;border-radius:50%"></div>
<div class="t" style="left:86.4px;top:434.6px;font-size:11.5px;line-height:14px;color:#303030;letter-spacing:-0.136px;">Empresa DEMO 7</div>
<svg style="left:40px;top:452px" width="10" height="10" viewBox="0 0 10 10"><rect x="0.6" y="0.6" width="7.8" height="7.8" rx="1.5" fill="#fafafa" stroke="#b0b0b0" stroke-width="1.2"/><path d="M2.5 4.5h4M4.5 2.5v4" stroke="#4a5ab0" stroke-width="1"/></svg>
<div class="a" style="left:49px;top:456px;width:6px;height:1px;background:repeating-linear-gradient(90deg,#b8b8b8 0 1px,transparent 1px 2px)"></div>
<svg style="left:55px;top:450px" width="12" height="12" viewBox="0 0 12 12"><rect x="0" y="0" width="12" height="12" rx="2.5" fill="#0a64c8"/><path d="M3 6.3l2 2 4-4.3" stroke="#e8f0ff" stroke-width="1" fill="none"/></svg>
<div class="a" style="left:73.5px;top:454.5px;width:4.0px;height:4.0px;background:#111;border-radius:50%"></div>
<div class="t" style="left:86.4px;top:449.7px;font-size:11.5px;line-height:14px;color:#303030;letter-spacing:-0.136px;">Empresa DEMO 8</div>
<svg style="left:40px;top:467px" width="10" height="10" viewBox="0 0 10 10"><rect x="0.6" y="0.6" width="7.8" height="7.8" rx="1.5" fill="#fafafa" stroke="#b0b0b0" stroke-width="1.2"/><path d="M2.5 4.5h4M4.5 2.5v4" stroke="#4a5ab0" stroke-width="1"/></svg>
<div class="a" style="left:49px;top:471px;width:6px;height:1px;background:repeating-linear-gradient(90deg,#b8b8b8 0 1px,transparent 1px 2px)"></div>
<svg style="left:55px;top:465px" width="12" height="12" viewBox="0 0 12 12"><rect x="0" y="0" width="12" height="12" rx="2.5" fill="#0a64c8"/><path d="M3 6.3l2 2 4-4.3" stroke="#e8f0ff" stroke-width="1" fill="none"/></svg>
<div class="a" style="left:73.5px;top:469.5px;width:4.0px;height:4.0px;background:#111;border-radius:50%"></div>
<div class="t" style="left:86.4px;top:464.7px;font-size:11.5px;line-height:14px;color:#303030;letter-spacing:-0.136px;">Empresa DEMO 9</div>
<svg style="left:40px;top:482px" width="10" height="10" viewBox="0 0 10 10"><rect x="0.6" y="0.6" width="7.8" height="7.8" rx="1.5" fill="#fafafa" stroke="#b0b0b0" stroke-width="1.2"/><path d="M2.5 4.5h4M4.5 2.5v4" stroke="#4a5ab0" stroke-width="1"/></svg>
<div class="a" style="left:49px;top:486px;width:6px;height:1px;background:repeating-linear-gradient(90deg,#b8b8b8 0 1px,transparent 1px 2px)"></div>
<svg style="left:55px;top:480px" width="12" height="12" viewBox="0 0 12 12"><rect x="0" y="0" width="12" height="12" rx="2.5" fill="#0a64c8"/><path d="M3 6.3l2 2 4-4.3" stroke="#e8f0ff" stroke-width="1" fill="none"/></svg>
<div class="a" style="left:73.5px;top:484.5px;width:4.0px;height:4.0px;background:#111;border-radius:50%"></div>
<div class="t" style="left:86.4px;top:479.7px;font-size:11.5px;line-height:14px;color:#303030;letter-spacing:-0.136px;">Empresa DEMO 8</div>
<svg style="left:40px;top:497px" width="10" height="10" viewBox="0 0 10 10"><rect x="0.6" y="0.6" width="7.8" height="7.8" rx="1.5" fill="#fafafa" stroke="#b0b0b0" stroke-width="1.2"/><path d="M2.5 4.5h4M4.5 2.5v4" stroke="#4a5ab0" stroke-width="1"/></svg>
<div class="a" style="left:49px;top:501px;width:6px;height:1px;background:repeating-linear-gradient(90deg,#b8b8b8 0 1px,transparent 1px 2px)"></div>
<svg style="left:55px;top:495px" width="12" height="12" viewBox="0 0 12 12"><rect x="0" y="0" width="12" height="12" rx="2.5" fill="#0a64c8"/><path d="M3 6.3l2 2 4-4.3" stroke="#e8f0ff" stroke-width="1" fill="none"/></svg>
<div class="a" style="left:73.5px;top:499.5px;width:4.0px;height:4.0px;background:#111;border-radius:50%"></div>
<div class="t" style="left:86.4px;top:494.8px;font-size:11.5px;line-height:14px;color:#303030;letter-spacing:-0.136px;">Empresa DEMO 8</div>
<svg style="left:40px;top:512px" width="10" height="10" viewBox="0 0 10 10"><rect x="0.6" y="0.6" width="7.8" height="7.8" rx="1.5" fill="#fafafa" stroke="#b0b0b0" stroke-width="1.2"/><path d="M2.5 4.5h4M4.5 2.5v4" stroke="#4a5ab0" stroke-width="1"/></svg>
<div class="a" style="left:49px;top:516px;width:6px;height:1px;background:repeating-linear-gradient(90deg,#b8b8b8 0 1px,transparent 1px 2px)"></div>
<svg style="left:55px;top:510px" width="12" height="12" viewBox="0 0 12 12"><rect x="0" y="0" width="12" height="12" rx="2.5" fill="#0a64c8"/><path d="M3 6.3l2 2 4-4.3" stroke="#e8f0ff" stroke-width="1" fill="none"/></svg>
<div class="a" style="left:73.5px;top:514.5px;width:4.0px;height:4.0px;background:#111;border-radius:50%"></div>
<div class="t" style="left:86.4px;top:509.8px;font-size:11.5px;line-height:14px;color:#303030;letter-spacing:-0.136px;">Empresa DEMO 4</div>
<svg style="left:40px;top:527px" width="10" height="10" viewBox="0 0 10 10"><rect x="0.6" y="0.6" width="7.8" height="7.8" rx="1.5" fill="#fafafa" stroke="#b0b0b0" stroke-width="1.2"/><path d="M2.5 4.5h4M4.5 2.5v4" stroke="#4a5ab0" stroke-width="1"/></svg>
<div class="a" style="left:49px;top:531px;width:6px;height:1px;background:repeating-linear-gradient(90deg,#b8b8b8 0 1px,transparent 1px 2px)"></div>
<svg style="left:55px;top:525px" width="12" height="12" viewBox="0 0 12 12"><rect x="0" y="0" width="12" height="12" rx="2.5" fill="#0a64c8"/><path d="M3 6.3l2 2 4-4.3" stroke="#e8f0ff" stroke-width="1" fill="none"/></svg>
<div class="a" style="left:73.5px;top:529.5px;width:4.0px;height:4.0px;background:#111;border-radius:50%"></div>
<div class="t" style="left:86.4px;top:524.8px;font-size:11.5px;line-height:14px;color:#303030;letter-spacing:-0.136px;">Empresa DEMO 6</div>
<svg style="left:40px;top:542px" width="10" height="10" viewBox="0 0 10 10"><rect x="0.6" y="0.6" width="7.8" height="7.8" rx="1.5" fill="#fafafa" stroke="#b0b0b0" stroke-width="1.2"/><path d="M2.5 4.5h4M4.5 2.5v4" stroke="#4a5ab0" stroke-width="1"/></svg>
<div class="a" style="left:49px;top:546px;width:6px;height:1px;background:repeating-linear-gradient(90deg,#b8b8b8 0 1px,transparent 1px 2px)"></div>
<svg style="left:55px;top:540px" width="12" height="12" viewBox="0 0 12 12"><rect x="0" y="0" width="12" height="12" rx="2.5" fill="#0a64c8"/><path d="M3 6.3l2 2 4-4.3" stroke="#e8f0ff" stroke-width="1" fill="none"/></svg>
<div class="a" style="left:73.5px;top:544.5px;width:4.0px;height:4.0px;background:#111;border-radius:50%"></div>
<div class="t" style="left:86.4px;top:539.8px;font-size:11.5px;line-height:14px;color:#303030;letter-spacing:-0.136px;">Empresa DEMO 9</div>
<svg style="left:40px;top:557px" width="10" height="10" viewBox="0 0 10 10"><rect x="0.6" y="0.6" width="7.8" height="7.8" rx="1.5" fill="#fafafa" stroke="#b0b0b0" stroke-width="1.2"/><path d="M2.5 4.5h4M4.5 2.5v4" stroke="#4a5ab0" stroke-width="1"/></svg>
<div class="a" style="left:49px;top:561px;width:6px;height:1px;background:repeating-linear-gradient(90deg,#b8b8b8 0 1px,transparent 1px 2px)"></div>
<svg style="left:55px;top:555px" width="12" height="12" viewBox="0 0 12 12"><rect x="0" y="0" width="12" height="12" rx="2.5" fill="#0a64c8"/><path d="M3 6.3l2 2 4-4.3" stroke="#e8f0ff" stroke-width="1" fill="none"/></svg>
<div class="a" style="left:73.5px;top:559.5px;width:4.0px;height:4.0px;background:#111;border-radius:50%"></div>
<div class="t" style="left:86.4px;top:554.9px;font-size:11.5px;line-height:14px;color:#303030;letter-spacing:-0.136px;">Empresa DEMO 6</div>
<svg style="left:40px;top:572px" width="10" height="10" viewBox="0 0 10 10"><rect x="0.6" y="0.6" width="7.8" height="7.8" rx="1.5" fill="#fafafa" stroke="#b0b0b0" stroke-width="1.2"/><path d="M2.5 4.5h4M4.5 2.5v4" stroke="#4a5ab0" stroke-width="1"/></svg>
<div class="a" style="left:49px;top:576px;width:6px;height:1px;background:repeating-linear-gradient(90deg,#b8b8b8 0 1px,transparent 1px 2px)"></div>
<svg style="left:55px;top:570px" width="12" height="12" viewBox="0 0 12 12"><rect x="0" y="0" width="12" height="12" rx="2.5" fill="#0a64c8"/><path d="M3 6.3l2 2 4-4.3" stroke="#e8f0ff" stroke-width="1" fill="none"/></svg>
<div class="a" style="left:73.5px;top:574.5px;width:4.0px;height:4.0px;background:#111;border-radius:50%"></div>
<div class="t" style="left:86.4px;top:569.9px;font-size:11.5px;line-height:14px;color:#303030;letter-spacing:-0.136px;">Empresa DEMO 9</div>
<svg style="left:40px;top:587px" width="10" height="10" viewBox="0 0 10 10"><rect x="0.6" y="0.6" width="7.8" height="7.8" rx="1.5" fill="#fafafa" stroke="#b0b0b0" stroke-width="1.2"/><path d="M2.5 4.5h4M4.5 2.5v4" stroke="#4a5ab0" stroke-width="1"/></svg>
<div class="a" style="left:49px;top:591px;width:6px;height:1px;background:repeating-linear-gradient(90deg,#b8b8b8 0 1px,transparent 1px 2px)"></div>
<svg style="left:55px;top:585px" width="12" height="12" viewBox="0 0 12 12"><rect x="0" y="0" width="12" height="12" rx="2.5" fill="#0a64c8"/><path d="M3 6.3l2 2 4-4.3" stroke="#e8f0ff" stroke-width="1" fill="none"/></svg>
<div class="a" style="left:73.5px;top:589.5px;width:4.0px;height:4.0px;background:#111;border-radius:50%"></div>
<div class="t" style="left:86.4px;top:584.9px;font-size:11.5px;line-height:14px;color:#303030;letter-spacing:-0.136px;">Empresa DEMO 6</div>
<svg style="left:40px;top:602px" width="10" height="10" viewBox="0 0 10 10"><rect x="0.6" y="0.6" width="7.8" height="7.8" rx="1.5" fill="#fafafa" stroke="#b0b0b0" stroke-width="1.2"/><path d="M2.5 4.5h4M4.5 2.5v4" stroke="#4a5ab0" stroke-width="1"/></svg>
<div class="a" style="left:49px;top:606px;width:6px;height:1px;background:repeating-linear-gradient(90deg,#b8b8b8 0 1px,transparent 1px 2px)"></div>
<svg style="left:55px;top:600px" width="12" height="12" viewBox="0 0 12 12"><rect x="0" y="0" width="12" height="12" rx="2.5" fill="#0a64c8"/><path d="M3 6.3l2 2 4-4.3" stroke="#e8f0ff" stroke-width="1" fill="none"/></svg>
<div class="a" style="left:73.5px;top:604.5px;width:4.0px;height:4.0px;background:#111;border-radius:50%"></div>
<div class="t" style="left:86.4px;top:600.0px;font-size:11.5px;line-height:14px;color:#303030;letter-spacing:-0.136px;">Empresa DEMO 9</div>
<svg style="left:40px;top:617px" width="10" height="10" viewBox="0 0 10 10"><rect x="0.6" y="0.6" width="7.8" height="7.8" rx="1.5" fill="#fafafa" stroke="#b0b0b0" stroke-width="1.2"/><path d="M2.5 4.5h4M4.5 2.5v4" stroke="#4a5ab0" stroke-width="1"/></svg>
<div class="a" style="left:49px;top:621px;width:6px;height:1px;background:repeating-linear-gradient(90deg,#b8b8b8 0 1px,transparent 1px 2px)"></div>
<svg style="left:55px;top:615px" width="12" height="12" viewBox="0 0 12 12"><rect x="0" y="0" width="12" height="12" rx="2.5" fill="#0a64c8"/><path d="M3 6.3l2 2 4-4.3" stroke="#e8f0ff" stroke-width="1" fill="none"/></svg>
<div class="a" style="left:73.5px;top:619.5px;width:4.0px;height:4.0px;background:#111;border-radius:50%"></div>
<div class="t" style="left:86.4px;top:615.0px;font-size:11.5px;line-height:14px;color:#303030;letter-spacing:-0.136px;">Empresa DEMO 8</div>
<svg style="left:40px;top:632px" width="10" height="10" viewBox="0 0 10 10"><rect x="0.6" y="0.6" width="7.8" height="7.8" rx="1.5" fill="#fafafa" stroke="#b0b0b0" stroke-width="1.2"/><path d="M2.5 4.5h4M4.5 2.5v4" stroke="#4a5ab0" stroke-width="1"/></svg>
<div class="a" style="left:49px;top:636px;width:6px;height:1px;background:repeating-linear-gradient(90deg,#b8b8b8 0 1px,transparent 1px 2px)"></div>
<svg style="left:55px;top:630px" width="12" height="12" viewBox="0 0 12 12"><rect x="0" y="0" width="12" height="12" rx="2.5" fill="#0a64c8"/><path d="M3 6.3l2 2 4-4.3" stroke="#e8f0ff" stroke-width="1" fill="none"/></svg>
<div class="a" style="left:73.5px;top:634.5px;width:4.0px;height:4.0px;background:#111;border-radius:50%"></div>
<div class="t" style="left:86.4px;top:630.0px;font-size:11.5px;line-height:14px;color:#303030;letter-spacing:-0.136px;">Empresa DEMO 9</div>
<svg style="left:40px;top:647px" width="10" height="10" viewBox="0 0 10 10"><rect x="0.6" y="0.6" width="7.8" height="7.8" rx="1.5" fill="#fafafa" stroke="#b0b0b0" stroke-width="1.2"/><path d="M2.5 4.5h4M4.5 2.5v4" stroke="#4a5ab0" stroke-width="1"/></svg>
<div class="a" style="left:49px;top:651px;width:6px;height:1px;background:repeating-linear-gradient(90deg,#b8b8b8 0 1px,transparent 1px 2px)"></div>
<svg style="left:55px;top:645px" width="12" height="12" viewBox="0 0 12 12"><rect x="0" y="0" width="12" height="12" rx="2.5" fill="#0a64c8"/><path d="M3 6.3l2 2 4-4.3" stroke="#e8f0ff" stroke-width="1" fill="none"/></svg>
<div class="a" style="left:73.5px;top:649.5px;width:4.0px;height:4.0px;background:#111;border-radius:50%"></div>
<div class="t" style="left:86.4px;top:645.0px;font-size:11.5px;line-height:14px;color:#303030;letter-spacing:-0.136px;">Empresa DEMO 9</div>
<svg style="left:40px;top:662px" width="10" height="10" viewBox="0 0 10 10"><rect x="0.6" y="0.6" width="7.8" height="7.8" rx="1.5" fill="#fafafa" stroke="#b0b0b0" stroke-width="1.2"/><path d="M2.5 4.5h4M4.5 2.5v4" stroke="#4a5ab0" stroke-width="1"/></svg>
<div class="a" style="left:49px;top:666px;width:6px;height:1px;background:repeating-linear-gradient(90deg,#b8b8b8 0 1px,transparent 1px 2px)"></div>
<svg style="left:55px;top:660px" width="12" height="12" viewBox="0 0 12 12"><rect x="0" y="0" width="12" height="12" rx="2.5" fill="#0a64c8"/><path d="M3 6.3l2 2 4-4.3" stroke="#e8f0ff" stroke-width="1" fill="none"/></svg>
<div class="a" style="left:73.5px;top:664.5px;width:4.0px;height:4.0px;background:#111;border-radius:50%"></div>
<div class="t" style="left:86.4px;top:660.1px;font-size:11.5px;line-height:14px;color:#303030;letter-spacing:-0.136px;">Empresa DEMO 5</div>
<div class="a" style="left:31px;top:670px;width:227px;height:6px;background:#f0f0f0"></div>
<div class="a" style="left:31px;top:669px;width:227px;height:2px;background:#b4bcc6"></div>
<div class="a" style="left:31px;top:675px;width:227px;height:101px;background:linear-gradient(90deg,#fff,#fbfbfb);border:2px solid #9aa0a6;border-left:none"></div>
<svg style="left:39px;top:686px" width="18" height="18" viewBox="0 0 18 18"><circle cx="9" cy="9" r="8" fill="#dfe8f8" stroke="#7ab0a0" stroke-width="2"/><path d="M9 4v5l-3 2" stroke="#9aa" stroke-width="1" fill="none"/></svg>
<div class="t" style="left:63.4px;top:680.3px;font-size:11.5px;line-height:14px;color:#303030;letter-spacing:0.044px;">Busca automática na SEFAZ</div>
<div class="a" style="left:61px;top:697px;width:189px;height:19px;background:#fff;border:1px solid #d4d4d4;border-radius:2px"></div>
<div class="t" style="left:64.9px;top:700.2px;font-size:11.5px;line-height:14px;color:#303030;letter-spacing:0.199px;">Buscar manualmente</div>
<svg style="left:237px;top:704px" width="9" height="5" viewBox="0 0 9 5"><path d="M0.5 0.5l4 4 4-4" stroke="#555" fill="none"/></svg>
<div class="a" style="left:37px;top:722px;width:215px;height:2px;background:#e4e4e4"></div>
<svg style="left:38px;top:728px" width="19" height="20" viewBox="0 0 19 20"><g transform="translate(8.5 8.5)"><circle r="6" fill="#f6c832"/><rect x="-1.6" y="-8.5" width="3.2" height="4" fill="#f6c832" transform="rotate(0)"/><rect x="-1.6" y="-8.5" width="3.2" height="4" fill="#f6c832" transform="rotate(45)"/><rect x="-1.6" y="-8.5" width="3.2" height="4" fill="#f6c832" transform="rotate(90)"/><rect x="-1.6" y="-8.5" width="3.2" height="4" fill="#f6c832" transform="rotate(135)"/><rect x="-1.6" y="-8.5" width="3.2" height="4" fill="#f6c832" transform="rotate(180)"/><rect x="-1.6" y="-8.5" width="3.2" height="4" fill="#f6c832" transform="rotate(225)"/><rect x="-1.6" y="-8.5" width="3.2" height="4" fill="#f6c832" transform="rotate(270)"/><rect x="-1.6" y="-8.5" width="3.2" height="4" fill="#f6c832" transform="rotate(315)"/><circle r="2.8" fill="#fff"/></g><circle cx="14" cy="15" r="4.6" fill="#34c05a" stroke="#fff"/><path d="M11.8 15l1.6 1.6 2.8-3" stroke="#fff" stroke-width="1.1" fill="none"/></svg>
<div class="t" style="left:62.9px;top:733.0px;font-size:11.5px;line-height:14px;color:#2a2ae8;letter-spacing:0.305px;text-decoration:underline;">Integração: enviar e receber XML</div>
<svg style="left:37px;top:751px" width="20" height="20" viewBox="0 0 20 20"><circle cx="10" cy="10" r="8.8" fill="#ddeefa" stroke="#3a4a5a" stroke-width="2.2"/><path d="M10 4.5v5.5" stroke="#222" stroke-width="1.5"/><circle cx="10" cy="10" r="1.3" fill="#222"/></svg>
<div class="t" style="left:62.9px;top:755.5px;font-size:11.5px;line-height:14px;color:#2a2ae8;letter-spacing:0.241px;text-decoration:underline;">Gerenciar Tarefas</div>
<div class="a" style="left:31px;top:776px;width:227px;height:23px;background:#f0f0f0"></div>
<svg style="left:43px;top:780px" width="19" height="15" viewBox="0 0 19 15"><path d="M0 3.5l3.5-1.5 1 8-3.5 1.5z" fill="#d83a4a"/><path d="M19 3.5l-3.5-1.5-1 8 3.5 1.5z" fill="#3a7ad8"/><path d="M4 3l4-1.5 3 1.5 4-1.5 1 7.5-6 5-6-3.5z" fill="#f0a870" stroke="#a0603a" stroke-width="0.8"/><path d="M7 7l2.5 2 2-1.5M8.5 9.5l2 1.5" stroke="#a0603a" stroke-width="0.8" fill="none"/></svg>
<div class="t" style="left:64.4px;top:782.0px;font-size:11.5px;line-height:14px;color:#2a2ae8;letter-spacing:0.212px;text-decoration:underline;">Termos e condições de uso</div>
<div class="a" style="left:31px;top:54px;width:1px;height:745px;background:#5c6066"></div>
<div class="a" style="left:32px;top:116px;width:1px;height:556px;background:#b0b8c2"></div>
<div class="a" style="left:32px;top:675px;width:1px;height:101px;background:#b0b8c2"></div>
<div class="a" style="left:260px;top:86px;width:995px;height:30px;background:linear-gradient(#fdfdfd,#f3f3f3);border-radius:6px 6px 0 0"></div>
<svg style="left:266px;top:91px" width="20" height="20" viewBox="0 0 20 20"><rect x="1" y="1" width="16" height="16" rx="3" fill="#fff" stroke="#303030" stroke-width="2"/><path d="M1 5h16" stroke="#303030" stroke-width="1.5"/><path d="M4 8h1M4 11h1M4 14h1M7 8h7M7 11h7M7 14h5" stroke="#555" stroke-width="1.2"/><ellipse cx="15" cy="16" rx="4.5" ry="3" fill="#303030"/><circle cx="15" cy="16" r="1.3" fill="#fff"/></svg>
<div class="a" style="left:290px;top:92px;width:1px;height:16px;background:#d0d0d0"></div>
<svg style="left:295px;top:94px" width="18" height="14" viewBox="0 0 18 14"><rect x="0.5" y="0.5" width="17" height="13" rx="1" fill="#fff" stroke="#555"/><path d="M3 2v10M5 2v10M8 2v10M10.5 2v10M13 2v10M15 2v10" stroke="#333" stroke-width="1.3"/></svg>
<div class="t" style="left:316.9px;top:94.5px;font-size:11.5px;line-height:14px;color:#303030;letter-spacing:0.003px;">Chaves</div>
<div class="a" style="left:365px;top:92px;width:1px;height:16px;background:#d0d0d0"></div>
<div class="t" style="left:370.9px;top:93.0px;font-size:11.5px;line-height:14px;color:#303030;letter-spacing:0.029px;">Busca :</div>
<div class="a" style="left:416px;top:88px;width:197px;height:20px;background:#fffde2"></div>
<svg style="left:615px;top:91px" width="20" height="20" viewBox="0 0 20 20"><circle cx="10" cy="10" r="9.5" fill="#2ab2d8"/><text x="10" y="15" font-size="14" font-weight="bold" font-family="Liberation Sans" fill="#fff" text-anchor="middle">?</text></svg>
<div class="a" style="left:639px;top:92px;width:1px;height:15px;background:#d0d0d0"></div>
<div class="a" style="left:643px;top:89px;width:74px;height:18px;background:#fffde2"></div>
<div class="t" style="left:646.4px;top:92.5px;font-size:11.5px;line-height:14px;color:#303030;letter-spacing:0.130px;">Autorização</div>
<svg style="left:720px;top:96.5px" width="6" height="4" viewBox="0 0 6 4"><path d="M0 0.5H6L3 3.5Z" fill="#333"/></svg>
<div class="a" style="left:731px;top:89px;width:80px;height:19px;background:#fffde2"></div>
<div class="t" style="left:738.9px;top:92.5px;font-size:11.5px;line-height:14px;color:#303030;letter-spacing:0.389px;">27/12/2020</div>
<div class="t" style="left:813.9px;top:90.5px;font-size:11.5px;line-height:14px;color:#303030;letter-spacing:0.266px;">até</div>
<div class="a" style="left:836px;top:88px;width:80px;height:20px;background:#fffde2"></div>
<div class="t" style="left:843.9px;top:92.5px;font-size:11.5px;line-height:14px;color:#303030;letter-spacing:0.389px;">31/12/2023</div>
<div class="a" style="left:919px;top:92px;width:1px;height:15px;background:#d0d0d0"></div>
<svg style="left:923px;top:91px" width="20" height="19" viewBox="0 0 20 19"><path d="M13.1 15.7A7.2 7.2 0 1 1 16.3 7" stroke="#7aae68" stroke-width="4" fill="none"/><path d="M13.1 15.7A7.2 7.2 0 1 1 16.3 7" stroke="#c0e4a8" stroke-width="2" fill="none"/><path d="M12.8 7.2H20L16.4 11.8Z" fill="#d8f0c8" stroke="#7aae68" stroke-width="1.1" stroke-linejoin="round"/></svg>
<div class="a" style="left:947px;top:92px;width:1px;height:15px;background:#d0d0d0"></div>
<svg style="left:952px;top:90px" width="20" height="20" viewBox="0 0 20 20"><path d="M10 0v8M10 12v8M0 10h8M12 10h8" stroke="#111" stroke-width="1.6"/><path d="M7 5l3 3.5 3-3.5zM7 15l3-3.5 3 3.5zM5 7l3.5 3-3.5 3zM15 7l-3.5 3 3.5 3z" fill="#111"/></svg>
<div class="a" style="left:975px;top:92px;width:1px;height:15px;background:#d0d0d0"></div>
<svg style="left:982px;top:93px" width="16" height="16" viewBox="0 0 16 16"><path d="M1 1l5 5M15 1l-5 5M1 15l5-5M15 15l-5-5" stroke="#2a90f0" stroke-width="1.8"/><path d="M0 0h5l-5 5zM16 0h-5l5 5zM0 16h5l-5-5zM16 16h-5l5-5z" fill="#2a90f0"/></svg>
<svg style="left:1003px;top:90px" width="20" height="20" viewBox="0 0 20 20"><rect x="1" y="1" width="16" height="16" rx="3" fill="#fff" stroke="#303030" stroke-width="2"/><path d="M1 5h16" stroke="#303030" stroke-width="1.5"/><path d="M4 8h1M4 11h1M4 14h1M7 8h7M7 11h7M7 14h5" stroke="#555" stroke-width="1.2"/><ellipse cx="15" cy="16" rx="4.5" ry="3" fill="#303030"/><circle cx="15" cy="16" r="1.3" fill="#fff"/></svg>
<div class="a" style="left:263px;top:118px;width:165px;height:22px;background:#e2f6cc;border:1px solid #b9cca6;border-bottom:none;border-radius:5px 5px 0 0"></div>
<svg style="left:268px;top:121px" width="14" height="15" viewBox="0 0 14 15"><rect x="1" y="1" width="8" height="13" fill="#fff" stroke="#1a2ad8" stroke-width="2"/><path d="M3 4h5M3 7h5M3 10h5" stroke="#f0a040" stroke-width="2"/><rect x="8" y="8" width="6" height="7" fill="#f8c070"/><path d="M9 11h4M9 13h4" stroke="#e04a2a" stroke-width="1"/></svg>
<div class="t" style="left:286.9px;top:121.3px;font-size:11.5px;line-height:14px;color:#303030;letter-spacing:0.207px;">Emitidos por terceiros</div>
<svg style="left:415px;top:123px" width="9" height="9" viewBox="0 0 9 9"><path d="M1 1l7 7M8 1l-7 7" stroke="#111" stroke-width="2"/></svg>
<div class="a" style="left:429px;top:120px;width:172px;height:20px;background:#f6f6f6;border:1px solid #c8c8c8;border-bottom:none;border-radius:5px 5px 0 0"></div>
<svg style="left:434px;top:121px" width="14" height="15" viewBox="0 0 14 15"><rect x="1" y="1" width="8" height="13" fill="#fff" stroke="#1a2ad8" stroke-width="2"/><path d="M3 4h5M3 7h5M3 10h5" stroke="#f0a040" stroke-width="2"/><rect x="8" y="8" width="6" height="7" fill="#f8c070"/><path d="M9 11h4M9 13h4" stroke="#e04a2a" stroke-width="1"/></svg>
<div class="t" style="left:451.9px;top:121.3px;font-size:11.5px;line-height:14px;color:#303030;letter-spacing:0.204px;">Emitidos pela empresa</div>
<svg style="left:587px;top:123px" width="9" height="9" viewBox="0 0 9 9"><path d="M1 1l7 7M8 1l-7 7" stroke="#111" stroke-width="2"/></svg>
<div class="a" style="left:263px;top:138px;width:991px;height:639px;background:#fff;border:2px solid #b2c69e;box-shadow:inset 0 0 0 1px #d8d8d8"></div>
<div class="a" style="left:296px;top:142px;width:1px;height:18px;background:#ececec"></div>
<div class="a" style="left:330px;top:142px;width:1px;height:18px;background:#ececec"></div>
<div class="a" style="left:399px;top:142px;width:1px;height:18px;background:#ececec"></div>
<div class="a" style="left:440px;top:142px;width:1px;height:18px;background:#ececec"></div>
<div class="a" style="left:696px;top:142px;width:1px;height:18px;background:#ececec"></div>
<div class="a" style="left:840px;top:142px;width:1px;height:18px;background:#ececec"></div>
<div class="a" style="left:911px;top:142px;width:1px;height:18px;background:#ececec"></div>
<div class="a" style="left:1013px;top:142px;width:1px;height:18px;background:#ececec"></div>
<svg style="left:271px;top:143px" width="12" height="12" viewBox="0 0 12 12"><rect x="0.7" y="0.7" width="10.6" height="10.6" rx="2" fill="#f2f2f2" stroke="#888" stroke-width="1.4"/></svg>
<div class="t" style="left:298.9px;top:144.0px;font-size:11.5px;line-height:14px;color:#333;letter-spacing:0.398px;">‹..</div>
<svg style="left:313px;top:147px" width="10" height="6" viewBox="0 0 10 6"><path d="M0 0h10l-5 6z" fill="#556070"/></svg>
<div class="t" style="left:351.4px;top:143.5px;font-size:11.5px;line-height:14px;color:#333;letter-spacing:-0.391px;">Num</div>
<div class="t" style="left:403.9px;top:143.5px;font-size:11.5px;line-height:14px;color:#333;letter-spacing:0.289px;">Serie</div>
<div class="t" style="left:444.9px;top:143.5px;font-size:11.5px;line-height:14px;color:#333;letter-spacing:0.016px;">Tipo</div>
<div class="t" style="left:588.4px;top:143.5px;font-size:11.5px;line-height:14px;color:#333;letter-spacing:0.729px;">Etiq</div>
<div class="t" style="left:752.4px;top:143.5px;font-size:11.5px;line-height:14px;color:#333;letter-spacing:0.188px;">DtAut</div>
<div class="t" style="left:861.9px;top:143.5px;font-size:11.5px;line-height:14px;color:#333;letter-spacing:0.129px;">Valor</div>
<div class="t" style="left:947.4px;top:143.5px;font-size:11.5px;line-height:14px;color:#333;letter-spacing:-0.188px;">Venc.</div>
<div class="t" style="left:1131.4px;top:143.5px;font-size:11.5px;line-height:14px;color:#333;letter-spacing:0.184px;">Status</div>
<div class="a" style="left:1235px;top:140px;width:17px;height:152px;background:#f3f3f3"></div>
<div class="a" style="left:1241px;top:157px;width:2px;height:15px;background:#555"></div>
<div class="a" style="left:296px;top:162px;width:35px;height:599px;background:#f0eefb"></div>
<div class="t" style="left:276.4px;top:164.5px;font-size:11.5px;line-height:14px;color:#3a5ab8;letter-spacing:-0.443px;">2023.02 [20 items]</div>
<div class="a" style="left:368px;top:170px;width:870px;height:1px;background:#dde6f0"></div>
<svg style="left:272px;top:184px" width="12" height="12" viewBox="0 0 12 12"><rect x="0.7" y="0.7" width="10.6" height="10.6" rx="2" fill="#f2f2f2" stroke="#888" stroke-width="1.4"/></svg>
<svg style="left:306px;top:182px" width="14" height="14" viewBox="0 0 14 14"><circle cx="7.0" cy="7.0" r="6.6" fill="#5cb860"/><text x="7.0" y="8.8" font-size="4.666666666666667" font-weight="bold" font-family="Liberation Sans" fill="#e8ffe8" text-anchor="middle">XML</text></svg>
<div class="t" style="left:334.9px;top:183.3px;font-size:11.5px;line-height:14px;color:#a040b0;letter-spacing:-0.002px;">000000025</div>
<div class="t" style="left:415.9px;top:183.3px;font-size:12px;line-height:14px;color:#303030;">1</div>
<div class="t" style="left:443.9px;top:183.3px;font-size:11.5px;line-height:14px;color:#303030;letter-spacing:-0.227px;">CTe</div>
<div class="a" style="left:502px;top:182px;width:195px;height:16px;background:#9de9c9"></div>
<div class="t" style="left:505.4px;top:183.3px;font-size:11.5px;line-height:14px;color:#303030;letter-spacing:0.286px;">Nota Lançada</div>
<div class="t" style="left:736.9px;top:183.3px;font-size:11.5px;line-height:14px;color:#303030;letter-spacing:0.222px;">2023.02.08</div>
<div class="t" style="left:869.2px;top:183.3px;font-size:11.5px;line-height:14px;color:#303030;letter-spacing:0.309px;">283,03</div>
<div class="t" style="left:930.9px;top:183.3px;font-size:11.5px;line-height:14px;color:#303030;letter-spacing:0.222px;">2023.03.10</div>
<svg style="left:1014px;top:182px" width="12" height="14" viewBox="0 0 12 14"><rect x="1" y="1" width="10" height="7" fill="#fff" stroke="#222" stroke-width="0.8"/><path d="M1 1h2.5v1.75H1zM6 1h2.5v1.75H6zM3.5 2.75H6v1.75H3.5zM8.5 2.75H11v1.75H8.5zM1 4.5h2.5v1.75H1zM6 4.5h2.5v1.75H6zM3.5 6.25H6V8H3.5zM8.5 6.25H11V8H8.5z" fill="#222"/><path d="M1 1v12" stroke="#444" stroke-width="1.2"/></svg>
<svg style="left:1028px;top:183px" width="14" height="14" viewBox="0 0 14 14"><circle cx="5" cy="3" r="2.2" fill="#f0b060"/><rect x="2" y="5" width="6" height="6" fill="#f5a020"/><rect x="6" y="7" width="7" height="5" rx="1" fill="#2a5ab0"/><circle cx="8" cy="12.5" r="1.5" fill="#222"/><circle cx="12" cy="12.5" r="1.5" fill="#222"/></svg>
<svg style="left:272px;top:201px" width="12" height="12" viewBox="0 0 12 12"><rect x="0.7" y="0.7" width="10.6" height="10.6" rx="2" fill="#f2f2f2" stroke="#888" stroke-width="1.4"/></svg>
<svg style="left:306px;top:199px" width="14" height="14" viewBox="0 0 14 14"><circle cx="7.0" cy="7.0" r="6.6" fill="#5cb860"/><text x="7.0" y="8.8" font-size="4.666666666666667" font-weight="bold" font-family="Liberation Sans" fill="#e8ffe8" text-anchor="middle">XML</text></svg>
<div class="t" style="left:334.9px;top:200.2px;font-size:11.5px;line-height:14px;color:#4646f0;letter-spacing:-0.002px;">000021333</div>
<div class="t" style="left:415.9px;top:200.2px;font-size:12px;line-height:14px;color:#303030;">1</div>
<div class="t" style="left:443.9px;top:200.2px;font-size:11.5px;line-height:14px;color:#303030;letter-spacing:-0.227px;">CTe</div>
<div class="t" style="left:736.9px;top:200.2px;font-size:11.5px;line-height:14px;color:#303030;letter-spacing:0.222px;">2023.02.08</div>
<div class="t" style="left:875.9px;top:200.2px;font-size:11.5px;line-height:14px;color:#303030;letter-spacing:0.316px;">39,00</div>
<svg style="left:1014px;top:199px" width="12" height="14" viewBox="0 0 12 14"><rect x="1" y="1" width="10" height="7" fill="#fff" stroke="#222" stroke-width="0.8"/><path d="M1 1h2.5v1.75H1zM6 1h2.5v1.75H6zM3.5 2.75H6v1.75H3.5zM8.5 2.75H11v1.75H8.5zM1 4.5h2.5v1.75H1zM6 4.5h2.5v1.75H6zM3.5 6.25H6V8H3.5zM8.5 6.25H11V8H8.5z" fill="#222"/><path d="M1 1v12" stroke="#444" stroke-width="1.2"/></svg>
<svg style="left:1028px;top:200px" width="14" height="14" viewBox="0 0 14 14"><circle cx="5" cy="3" r="2.2" fill="#f0b060"/><rect x="2" y="5" width="6" height="6" fill="#f5a020"/><rect x="6" y="7" width="7" height="5" rx="1" fill="#2a5ab0"/><circle cx="8" cy="12.5" r="1.5" fill="#222"/><circle cx="12" cy="12.5" r="1.5" fill="#222"/></svg>
<svg style="left:272px;top:218px" width="12" height="12" viewBox="0 0 12 12"><rect x="0.7" y="0.7" width="10.6" height="10.6" rx="2" fill="#f2f2f2" stroke="#888" stroke-width="1.4"/></svg>
<div class="t" style="left:334.9px;top:217.2px;font-size:11.5px;line-height:14px;color:#a040b0;letter-spacing:-0.002px;">000000015</div>
<div class="t" style="left:415.9px;top:217.2px;font-size:12px;line-height:14px;color:#303030;">1</div>
<div class="t" style="left:443.9px;top:217.2px;font-size:11.5px;line-height:14px;color:#303030;letter-spacing:-1.367px;">NFe</div>
<div class="a" style="left:502px;top:216px;width:195px;height:16px;background:#97a0c9"></div>
<div class="t" style="left:505.4px;top:217.2px;font-size:11.5px;line-height:14px;color:#303030;letter-spacing:0.266px;">Nota Arquivada</div>
<div class="t" style="left:736.9px;top:217.2px;font-size:11.5px;line-height:14px;color:#303030;letter-spacing:0.222px;">2023.02.08</div>
<div class="t" style="left:855.9px;top:217.2px;font-size:11.5px;line-height:14px;color:#303030;letter-spacing:0.301px;">45650,00</div>
<svg style="left:1014px;top:216px" width="12" height="14" viewBox="0 0 12 14"><rect x="1" y="1" width="10" height="7" fill="#fff" stroke="#222" stroke-width="0.8"/><path d="M1 1h2.5v1.75H1zM6 1h2.5v1.75H6zM3.5 2.75H6v1.75H3.5zM8.5 2.75H11v1.75H8.5zM1 4.5h2.5v1.75H1zM6 4.5h2.5v1.75H6zM3.5 6.25H6V8H3.5zM8.5 6.25H11V8H8.5z" fill="#222"/><path d="M1 1v12" stroke="#444" stroke-width="1.2"/></svg>
<svg style="left:272px;top:235px" width="12" height="12" viewBox="0 0 12 12"><rect x="0.7" y="0.7" width="10.6" height="10.6" rx="2" fill="#f2f2f2" stroke="#888" stroke-width="1.4"/></svg>
<svg style="left:306px;top:233px" width="14" height="14" viewBox="0 0 14 14"><circle cx="7.0" cy="7.0" r="6.6" fill="#5cb860"/><text x="7.0" y="8.8" font-size="4.666666666666667" font-weight="bold" font-family="Liberation Sans" fill="#e8ffe8" text-anchor="middle">XML</text></svg>
<div class="t" style="left:334.9px;top:234.2px;font-size:11.5px;line-height:14px;color:#4646f0;letter-spacing:-0.002px;">000089315</div>
<div class="t" style="left:415.9px;top:234.2px;font-size:12px;line-height:14px;color:#303030;">1</div>
<div class="t" style="left:443.9px;top:234.2px;font-size:11.5px;line-height:14px;color:#303030;letter-spacing:-0.227px;">CTe</div>
<div class="a" style="left:502px;top:233px;width:195px;height:16px;background:#fea3a3"></div>
<div class="t" style="left:505.4px;top:234.2px;font-size:11.5px;line-height:14px;color:#303030;letter-spacing:0.236px;">Nota com erro fiscal</div>
<div class="t" style="left:736.9px;top:234.2px;font-size:11.5px;line-height:14px;color:#303030;letter-spacing:0.222px;">2023.02.08</div>
<div class="t" style="left:882.6px;top:234.2px;font-size:11.5px;line-height:14px;color:#303030;letter-spacing:0.328px;">0,10</div>
<svg style="left:1014px;top:233px" width="12" height="14" viewBox="0 0 12 14"><rect x="1" y="1" width="10" height="7" fill="#fff" stroke="#222" stroke-width="0.8"/><path d="M1 1h2.5v1.75H1zM6 1h2.5v1.75H6zM3.5 2.75H6v1.75H3.5zM8.5 2.75H11v1.75H8.5zM1 4.5h2.5v1.75H1zM6 4.5h2.5v1.75H6zM3.5 6.25H6V8H3.5zM8.5 6.25H11V8H8.5z" fill="#222"/><path d="M1 1v12" stroke="#444" stroke-width="1.2"/></svg>
<svg style="left:1028px;top:234px" width="14" height="14" viewBox="0 0 14 14"><circle cx="5" cy="3" r="2.2" fill="#f0b060"/><rect x="2" y="5" width="6" height="6" fill="#f5a020"/><rect x="6" y="7" width="7" height="5" rx="1" fill="#2a5ab0"/><circle cx="8" cy="12.5" r="1.5" fill="#222"/><circle cx="12" cy="12.5" r="1.5" fill="#222"/></svg>
<svg style="left:272px;top:252px" width="12" height="12" viewBox="0 0 12 12"><rect x="0.7" y="0.7" width="10.6" height="10.6" rx="2" fill="#f2f2f2" stroke="#888" stroke-width="1.4"/></svg>
<svg style="left:306px;top:250px" width="14" height="14" viewBox="0 0 14 14"><circle cx="7.0" cy="7.0" r="6.6" fill="#5cb860"/><text x="7.0" y="8.8" font-size="4.666666666666667" font-weight="bold" font-family="Liberation Sans" fill="#e8ffe8" text-anchor="middle">XML</text></svg>
<div class="t" style="left:334.9px;top:251.1px;font-size:11.5px;line-height:14px;color:#4646f0;letter-spacing:-0.002px;">000021501</div>
<div class="t" style="left:415.9px;top:251.1px;font-size:12px;line-height:14px;color:#303030;">1</div>
<div class="t" style="left:443.9px;top:251.1px;font-size:11.5px;line-height:14px;color:#303030;letter-spacing:-0.227px;">CTe</div>
<div class="t" style="left:736.9px;top:251.1px;font-size:11.5px;line-height:14px;color:#303030;letter-spacing:0.222px;">2023.02.08</div>
<div class="t" style="left:875.9px;top:251.1px;font-size:11.5px;line-height:14px;color:#303030;letter-spacing:0.316px;">10,00</div>
<svg style="left:1014px;top:250px" width="12" height="14" viewBox="0 0 12 14"><rect x="1" y="1" width="10" height="7" fill="#fff" stroke="#222" stroke-width="0.8"/><path d="M1 1h2.5v1.75H1zM6 1h2.5v1.75H6zM3.5 2.75H6v1.75H3.5zM8.5 2.75H11v1.75H8.5zM1 4.5h2.5v1.75H1zM6 4.5h2.5v1.75H6zM3.5 6.25H6V8H3.5zM8.5 6.25H11V8H8.5z" fill="#222"/><path d="M1 1v12" stroke="#444" stroke-width="1.2"/></svg>
<svg style="left:1028px;top:251px" width="14" height="14" viewBox="0 0 14 14"><circle cx="5" cy="3" r="2.2" fill="#f0b060"/><rect x="2" y="5" width="6" height="6" fill="#f5a020"/><rect x="6" y="7" width="7" height="5" rx="1" fill="#2a5ab0"/><circle cx="8" cy="12.5" r="1.5" fill="#222"/><circle cx="12" cy="12.5" r="1.5" fill="#222"/></svg>
<svg style="left:272px;top:269px" width="12" height="12" viewBox="0 0 12 12"><rect x="0.7" y="0.7" width="10.6" height="10.6" rx="2" fill="#f2f2f2" stroke="#888" stroke-width="1.4"/></svg>
<svg style="left:306px;top:267px" width="14" height="14" viewBox="0 0 14 14"><circle cx="7.0" cy="7.0" r="6.6" fill="#5cb860"/><text x="7.0" y="8.8" font-size="4.666666666666667" font-weight="bold" font-family="Liberation Sans" fill="#e8ffe8" text-anchor="middle">XML</text></svg>
<div class="t" style="left:334.9px;top:268.1px;font-size:11.5px;line-height:14px;color:#4646f0;letter-spacing:-0.002px;">000564324</div>
<div class="t" style="left:415.9px;top:268.1px;font-size:12px;line-height:14px;color:#303030;">3</div>
<div class="t" style="left:443.9px;top:268.1px;font-size:11.5px;line-height:14px;color:#303030;letter-spacing:-1.367px;">NFe</div>
<svg style="left:504px;top:268px" width="13" height="13" viewBox="0 0 13 13"><path d="M2 3l8-2 2 9-8 2z" fill="#f6d030" stroke="#8a7010" stroke-width="0.8"/><path d="M5 5l4-1M5.5 7.5l4-1" stroke="#8a7010" stroke-width="0.7"/></svg>
<div class="t" style="left:736.9px;top:268.1px;font-size:11.5px;line-height:14px;color:#303030;letter-spacing:0.222px;">2023.02.08</div>
<div class="t" style="left:855.9px;top:268.1px;font-size:11.5px;line-height:14px;color:#303030;letter-spacing:0.301px;">42470,00</div>
<svg style="left:1014px;top:267px" width="12" height="14" viewBox="0 0 12 14"><rect x="1" y="1" width="10" height="7" fill="#fff" stroke="#222" stroke-width="0.8"/><path d="M1 1h2.5v1.75H1zM6 1h2.5v1.75H6zM3.5 2.75H6v1.75H3.5zM8.5 2.75H11v1.75H8.5zM1 4.5h2.5v1.75H1zM6 4.5h2.5v1.75H6zM3.5 6.25H6V8H3.5zM8.5 6.25H11V8H8.5z" fill="#222"/><path d="M1 1v12" stroke="#444" stroke-width="1.2"/></svg>
<svg style="left:272px;top:286px" width="12" height="12" viewBox="0 0 12 12"><rect x="0.7" y="0.7" width="10.6" height="10.6" rx="2" fill="#f2f2f2" stroke="#888" stroke-width="1.4"/></svg>
<svg style="left:306px;top:284px" width="14" height="14" viewBox="0 0 14 14"><circle cx="7.0" cy="7.0" r="6.6" fill="#5cb860"/><text x="7.0" y="8.8" font-size="4.666666666666667" font-weight="bold" font-family="Liberation Sans" fill="#e8ffe8" text-anchor="middle">XML</text></svg>
<div class="t" style="left:334.9px;top:285.0px;font-size:11.5px;line-height:14px;color:#4646f0;letter-spacing:-0.002px;">000564323</div>
<div class="t" style="left:415.9px;top:285.0px;font-size:12px;line-height:14px;color:#303030;">3</div>
<div class="t" style="left:443.9px;top:285.0px;font-size:11.5px;line-height:14px;color:#303030;letter-spacing:-1.367px;">NFe</div>
<div class="a" style="left:502px;top:284px;width:195px;height:16px;background:#c81fe0"></div>
<svg style="left:504px;top:285px" width="13" height="13" viewBox="0 0 13 13"><path d="M2 3l8-2 2 9-8 2z" fill="#f6d030" stroke="#8a7010" stroke-width="0.8"/><path d="M5 5l4-1M5.5 7.5l4-1" stroke="#8a7010" stroke-width="0.7"/></svg>
<div class="t" style="left:518.4px;top:285.0px;font-size:11.5px;line-height:14px;color:#303030;letter-spacing:0.250px;">Pendente de escrituração</div>
<div class="t" style="left:736.9px;top:285.0px;font-size:11.5px;line-height:14px;color:#303030;letter-spacing:0.222px;">2023.02.08</div>
<div class="t" style="left:855.9px;top:285.0px;font-size:11.5px;line-height:14px;color:#303030;letter-spacing:0.301px;">42470,00</div>
<div class="t" style="left:930.9px;top:285.0px;font-size:11.5px;line-height:14px;color:#303030;letter-spacing:0.222px;">2023.03.17</div>
<svg style="left:1014px;top:284px" width="12" height="14" viewBox="0 0 12 14"><rect x="1" y="1" width="10" height="7" fill="#fff" stroke="#222" stroke-width="0.8"/><path d="M1 1h2.5v1.75H1zM6 1h2.5v1.75H6zM3.5 2.75H6v1.75H3.5zM8.5 2.75H11v1.75H8.5zM1 4.5h2.5v1.75H1zM6 4.5h2.5v1.75H6zM3.5 6.25H6V8H3.5zM8.5 6.25H11V8H8.5z" fill="#222"/><path d="M1 1v12" stroke="#444" stroke-width="1.2"/></svg>
<div class="a" style="left:265px;top:667px;width:10px;height:14px;background:#f2e2c6"></div>
<div class="a" style="left:265px;top:701px;width:10px;height:14px;background:#f2e2c6"></div>
<svg style="left:272px;top:303px" width="12" height="13" viewBox="0 0 12 13"><rect x="0.7" y="0.7" width="10.6" height="11.6" rx="2" fill="#f2f2f2" stroke="#888" stroke-width="1.4"/></svg>
<svg style="left:272px;top:320px" width="12" height="13" viewBox="0 0 12 13"><rect x="0.7" y="0.7" width="10.6" height="11.6" rx="2" fill="#f2f2f2" stroke="#888" stroke-width="1.4"/></svg>
<svg style="left:272px;top:337px" width="12" height="13" viewBox="0 0 12 13"><rect x="0.7" y="0.7" width="10.6" height="11.6" rx="2" fill="#f2f2f2" stroke="#888" stroke-width="1.4"/></svg>
<svg style="left:272px;top:354px" width="12" height="13" viewBox="0 0 12 13"><rect x="0.7" y="0.7" width="10.6" height="11.6" rx="2" fill="#f2f2f2" stroke="#888" stroke-width="1.4"/></svg>
<svg style="left:272px;top:370px" width="12" height="13" viewBox="0 0 12 13"><rect x="0.7" y="0.7" width="10.6" height="11.6" rx="2" fill="#f2f2f2" stroke="#888" stroke-width="1.4"/></svg>
<svg style="left:272px;top:387px" width="12" height="13" viewBox="0 0 12 13"><rect x="0.7" y="0.7" width="10.6" height="11.6" rx="2" fill="#f2f2f2" stroke="#888" stroke-width="1.4"/></svg>
<svg style="left:272px;top:404px" width="12" height="13" viewBox="0 0 12 13"><rect x="0.7" y="0.7" width="10.6" height="11.6" rx="2" fill="#f2f2f2" stroke="#888" stroke-width="1.4"/></svg>
<svg style="left:272px;top:421px" width="12" height="13" viewBox="0 0 12 13"><rect x="0.7" y="0.7" width="10.6" height="11.6" rx="2" fill="#f2f2f2" stroke="#888" stroke-width="1.4"/></svg>
<svg style="left:272px;top:438px" width="12" height="13" viewBox="0 0 12 13"><rect x="0.7" y="0.7" width="10.6" height="11.6" rx="2" fill="#f2f2f2" stroke="#888" stroke-width="1.4"/></svg>
<svg style="left:272px;top:455px" width="12" height="13" viewBox="0 0 12 13"><rect x="0.7" y="0.7" width="10.6" height="11.6" rx="2" fill="#f2f2f2" stroke="#888" stroke-width="1.4"/></svg>
<svg style="left:272px;top:472px" width="12" height="13" viewBox="0 0 12 13"><rect x="0.7" y="0.7" width="10.6" height="11.6" rx="2" fill="#f2f2f2" stroke="#888" stroke-width="1.4"/></svg>
<svg style="left:272px;top:489px" width="12" height="13" viewBox="0 0 12 13"><rect x="0.7" y="0.7" width="10.6" height="11.6" rx="2" fill="#f2f2f2" stroke="#888" stroke-width="1.4"/></svg>
<svg style="left:272px;top:506px" width="12" height="13" viewBox="0 0 12 13"><rect x="0.7" y="0.7" width="10.6" height="11.6" rx="2" fill="#f2f2f2" stroke="#888" stroke-width="1.4"/></svg>
<svg style="left:272px;top:550px" width="12" height="13" viewBox="0 0 12 13"><rect x="0.7" y="0.7" width="10.6" height="11.6" rx="2" fill="#f2f2f2" stroke="#888" stroke-width="1.4"/></svg>
<svg style="left:272px;top:567px" width="12" height="13" viewBox="0 0 12 13"><rect x="0.7" y="0.7" width="10.6" height="11.6" rx="2" fill="#f2f2f2" stroke="#888" stroke-width="1.4"/></svg>
<svg style="left:272px;top:584px" width="12" height="13" viewBox="0 0 12 13"><rect x="0.7" y="0.7" width="10.6" height="11.6" rx="2" fill="#f2f2f2" stroke="#888" stroke-width="1.4"/></svg>
<svg style="left:272px;top:601px" width="12" height="13" viewBox="0 0 12 13"><rect x="0.7" y="0.7" width="10.6" height="11.6" rx="2" fill="#f2f2f2" stroke="#888" stroke-width="1.4"/></svg>
<svg style="left:272px;top:618px" width="12" height="13" viewBox="0 0 12 13"><rect x="0.7" y="0.7" width="10.6" height="11.6" rx="2" fill="#f2f2f2" stroke="#888" stroke-width="1.4"/></svg>
<svg style="left:272px;top:635px" width="12" height="13" viewBox="0 0 12 13"><rect x="0.7" y="0.7" width="10.6" height="11.6" rx="2" fill="#f2f2f2" stroke="#888" stroke-width="1.4"/></svg>
<svg style="left:272px;top:652px" width="12" height="13" viewBox="0 0 12 13"><rect x="0.7" y="0.7" width="10.6" height="11.6" rx="2" fill="#f2f2f2" stroke="#888" stroke-width="1.4"/></svg>
<svg style="left:272px;top:669px" width="12" height="13" viewBox="0 0 12 13"><rect x="0.7" y="0.7" width="10.6" height="11.6" rx="2" fill="#f2f2f2" stroke="#888" stroke-width="1.4"/></svg>
<svg style="left:272px;top:686px" width="12" height="13" viewBox="0 0 12 13"><rect x="0.7" y="0.7" width="10.6" height="11.6" rx="2" fill="#f2f2f2" stroke="#888" stroke-width="1.4"/></svg>
<svg style="left:272px;top:703px" width="12" height="13" viewBox="0 0 12 13"><rect x="0.7" y="0.7" width="10.6" height="11.6" rx="2" fill="#f2f2f2" stroke="#888" stroke-width="1.4"/></svg>
<svg style="left:272px;top:720px" width="12" height="13" viewBox="0 0 12 13"><rect x="0.7" y="0.7" width="10.6" height="11.6" rx="2" fill="#f2f2f2" stroke="#888" stroke-width="1.4"/></svg>
<svg style="left:272px;top:736px" width="12" height="13" viewBox="0 0 12 13"><rect x="0.7" y="0.7" width="10.6" height="11.6" rx="2" fill="#f2f2f2" stroke="#888" stroke-width="1.4"/></svg>
<svg style="left:272px;top:753px" width="12" height="13" viewBox="0 0 12 13"><rect x="0.7" y="0.7" width="10.6" height="11.6" rx="2" fill="#f2f2f2" stroke="#888" stroke-width="1.4"/></svg>
<div class="a" style="left:265px;top:761px;width:987px;height:14px;background:linear-gradient(#e8e8e8,#dcdcdc)"></div>
<div class="a" style="left:281px;top:765px;width:288px;height:2px;background:#888"></div>
<div class="a" style="left:258px;top:777px;width:1000px;height:22px;background:#f0f0f0"></div>
<svg style="left:507px;top:781px" width="12" height="15" viewBox="0 0 12 15"><circle cx="6" cy="5.5" r="5" fill="#f2c040" stroke="#b8862a"/><path d="M3 9l-1 5 4-2 4 2-1-5" fill="#e0a030"/></svg>
<div class="t" style="left:522.4px;top:784.0px;font-size:11px;line-height:13px;color:#8a2aa8;letter-spacing:-0.027px;">Tem dúvidas? Consulte a Central de Ajuda</div>
<div class="t" style="left:968.4px;top:784.0px;font-size:11px;line-height:13px;color:#333;">|</div>
<div class="t" style="left:980.9px;top:784.0px;font-size:11px;line-height:13px;color:#333;letter-spacing:-0.061px;">Documentos : 9737</div>
<div class="t" style="left:1087.4px;top:784.0px;font-size:11px;line-height:13px;color:#333;">|</div>
<div class="t" style="left:1102.4px;top:784.0px;font-size:11px;line-height:13px;color:#333;letter-spacing:-0.295px;">Valor Total : R$ 279.136.018,32</div>
<div class="a" style="left:1258px;top:87px;width:213px;height:29px;background:linear-gradient(#fdfdfd,#f3f3f3);border-top-left-radius:6px"></div>
<svg style="left:1266px;top:91px" width="17" height="20" viewBox="0 0 17 20"><g transform="scale(1.0)"><path d="M3 8Q3 1.5 8.5 1.5Q14 1.5 14 8V14H3Z" fill="#b47c4a"/><ellipse cx="8.5" cy="8.3" rx="3.9" ry="4.6" fill="#f4c8a8"/><path d="M4.6 7Q6 3 9.8 3.4Q12.6 3.8 12.8 7.5Q10.5 4.8 4.6 7Z" fill="#b47c4a"/><rect x="7.2" y="11.8" width="2.6" height="3" fill="#d8a888"/><path d="M3.3 8.5A5.2 5.8 0 0 1 13.7 8.5" stroke="#333" stroke-width="1.1" fill="none"/><rect x="2.2" y="7.3" width="2" height="3.4" rx="1" fill="#333"/><rect x="12.8" y="7.3" width="2" height="3.4" rx="1" fill="#333"/><path d="M13.6 10.5Q13 12.6 10 12.8" stroke="#333" stroke-width="0.9" fill="none"/><ellipse cx="9.5" cy="12.8" rx="1.3" ry="0.8" fill="#333"/><path d="M1 20Q1.3 14.6 6 14.2L8.5 19.6L11 14.2Q15.7 14.6 16 20Z" fill="#3a96dc"/><path d="M5.6 14.3L8.5 17L11.4 14.3L10.2 14L8.5 16L6.8 14Z" fill="#fff"/></g></svg>
<div class="t" style="left:1286.4px;top:94.5px;font-size:11.5px;line-height:14px;color:#303030;letter-spacing:0.208px;">Suporte</div>
<div class="a" style="left:1337px;top:92px;width:1px;height:16px;background:#d0d0d0"></div>
<svg style="left:1341px;top:90px" width="20" height="20" viewBox="0 0 20 20"><path d="M1.5 2.5h16l-6 7v6.5l-3 2v-8.5z" fill="#f4f4f4" stroke="#777" stroke-width="1.3" stroke-linejoin="round"/><path d="M2 3h15" stroke="#999" stroke-width="2.5"/><circle cx="14.5" cy="15" r="4.3" fill="#fff" stroke="#777" stroke-width="1.2"/><path d="M12.8 13.3l3.4 3.4M16.2 13.3l-3.4 3.4" stroke="#777" stroke-width="1.1"/></svg>
<div class="a" style="left:1365px;top:92px;width:1px;height:16px;background:#d0d0d0"></div>
<svg style="left:1370px;top:91px" width="18" height="18" viewBox="0 0 18 18"><g transform="translate(9 9)"><rect x="-3" y="-9" width="6" height="18" fill="#f6c020" transform="rotate(0)"/><rect x="-3" y="-9" width="6" height="18" fill="#f6c020" transform="rotate(30)"/><rect x="-3" y="-9" width="6" height="18" fill="#f6c020" transform="rotate(60)"/><rect x="-3" y="-9" width="6" height="18" fill="#f6c020" transform="rotate(90)"/><rect x="-3" y="-9" width="6" height="18" fill="#f6c020" transform="rotate(120)"/><rect x="-3" y="-9" width="6" height="18" fill="#f6c020" transform="rotate(150)"/><circle r="5.5" fill="#f6c832"/><path d="M-3.5 1A3.5 3.5 0 0 1 2.5 -2.5M3.5 -1A3.5 3.5 0 0 1 -2.5 2.5" stroke="#3a70d0" stroke-width="1.5" fill="none"/></g></svg>
<div class="a" style="left:1393px;top:92px;width:1px;height:16px;background:#d0d0d0"></div>
<div class="a" style="left:1258px;top:116px;width:213px;height:523px;background:#fff;border:2px solid #b4bcc4;border-right:none"></div>
<div class="a" style="left:1270px;top:123px;width:1px;height:135px;background:repeating-linear-gradient(#b8b8b8 0 1px,transparent 1px 2px)"></div>
<svg style="left:1267px;top:120px" width="10" height="10" viewBox="0 0 10 10"><rect x="0.5" y="0.5" width="8" height="8" fill="#fff" stroke="#a8a8a8"/><path d="M2.5 4.5h4" stroke="#3a4aa0" stroke-width="1"/><path d="M4.5 2.5v4" stroke="#3a4aa0" stroke-width="1"/></svg>
<div class="a" style="left:1276px;top:124px;width:7px;height:1px;background:repeating-linear-gradient(90deg,#b8b8b8 0 1px,transparent 1px 2px)"></div>
<svg style="left:1283px;top:118px" width="11" height="13" viewBox="0 0 11 13"><path d="M0 0h11l-4 5v8h-3V5z" fill="#3a9a8a"/><path d="M0 0h11l-4 5h-3z" fill="#5ab8a8"/></svg>
<div class="t" style="left:1299.4px;top:117.7px;font-size:11.5px;line-height:14px;color:#303030;letter-spacing:0.236px;">Filtrar por Tomador</div>
<svg style="left:1267px;top:135px" width="10" height="10" viewBox="0 0 10 10"><rect x="0.5" y="0.5" width="8" height="8" fill="#fff" stroke="#a8a8a8"/><path d="M2.5 4.5h4" stroke="#3a4aa0" stroke-width="1"/><path d="M4.5 2.5v4" stroke="#3a4aa0" stroke-width="1"/></svg>
<div class="a" style="left:1276px;top:139px;width:7px;height:1px;background:repeating-linear-gradient(90deg,#b8b8b8 0 1px,transparent 1px 2px)"></div>
<svg style="left:1283px;top:133px" width="11" height="13" viewBox="0 0 11 13"><path d="M0 0h11l-4 5v8h-3V5z" fill="#3a9a8a"/><path d="M0 0h11l-4 5h-3z" fill="#5ab8a8"/></svg>
<div class="t" style="left:1299.4px;top:132.7px;font-size:11.5px;line-height:14px;color:#303030;letter-spacing:0.228px;">Filtrar por Emissor</div>
<svg style="left:1267px;top:150px" width="10" height="10" viewBox="0 0 10 10"><rect x="0.5" y="0.5" width="8" height="8" fill="#fff" stroke="#a8a8a8"/><path d="M2.5 4.5h4" stroke="#3a4aa0" stroke-width="1"/><path d="M4.5 2.5v4" stroke="#3a4aa0" stroke-width="1"/></svg>
<div class="a" style="left:1276px;top:154px;width:7px;height:1px;background:repeating-linear-gradient(90deg,#b8b8b8 0 1px,transparent 1px 2px)"></div>
<svg style="left:1283px;top:148px" width="11" height="13" viewBox="0 0 11 13"><path d="M0 0h11l-4 5v8h-3V5z" fill="#3a9a8a"/><path d="M0 0h11l-4 5h-3z" fill="#5ab8a8"/></svg>
<div class="t" style="left:1299.4px;top:147.8px;font-size:11.5px;line-height:14px;color:#303030;letter-spacing:0.225px;">Filtrar por Tipo Doc</div>
<svg style="left:1267px;top:165px" width="10" height="10" viewBox="0 0 10 10"><rect x="0.5" y="0.5" width="8" height="8" fill="#fff" stroke="#a8a8a8"/><path d="M2.5 4.5h4" stroke="#3a4aa0" stroke-width="1"/><path d="M4.5 2.5v4" stroke="#3a4aa0" stroke-width="1"/></svg>
<div class="a" style="left:1276px;top:169px;width:7px;height:1px;background:repeating-linear-gradient(90deg,#b8b8b8 0 1px,transparent 1px 2px)"></div>
<svg style="left:1283px;top:163px" width="11" height="13" viewBox="0 0 11 13"><path d="M0 0h11l-4 5v8h-3V5z" fill="#3a9a8a"/><path d="M0 0h11l-4 5h-3z" fill="#5ab8a8"/></svg>
<div class="t" style="left:1299.4px;top:162.8px;font-size:11.5px;line-height:14px;color:#303030;letter-spacing:0.220px;">Filtrar por Etiquetas</div>
<svg style="left:1267px;top:180px" width="10" height="10" viewBox="0 0 10 10"><rect x="0.5" y="0.5" width="8" height="8" fill="#fff" stroke="#a8a8a8"/><path d="M2.5 4.5h4" stroke="#3a4aa0" stroke-width="1"/><path d="M4.5 2.5v4" stroke="#3a4aa0" stroke-width="1"/></svg>
<div class="a" style="left:1276px;top:184px;width:7px;height:1px;background:repeating-linear-gradient(90deg,#b8b8b8 0 1px,transparent 1px 2px)"></div>
<svg style="left:1283px;top:178px" width="11" height="13" viewBox="0 0 11 13"><path d="M0 0h11l-4 5v8h-3V5z" fill="#3a9a8a"/><path d="M0 0h11l-4 5h-3z" fill="#5ab8a8"/></svg>
<div class="t" style="left:1299.4px;top:177.8px;font-size:11.5px;line-height:14px;color:#303030;letter-spacing:0.219px;">Filtrar por Status</div>
<svg style="left:1267px;top:195px" width="10" height="10" viewBox="0 0 10 10"><rect x="0.5" y="0.5" width="8" height="8" fill="#fff" stroke="#a8a8a8"/><path d="M2.5 4.5h4" stroke="#3a4aa0" stroke-width="1"/><path d="M4.5 2.5v4" stroke="#3a4aa0" stroke-width="1"/></svg>
<div class="a" style="left:1276px;top:199px;width:7px;height:1px;background:repeating-linear-gradient(90deg,#b8b8b8 0 1px,transparent 1px 2px)"></div>
<svg style="left:1281px;top:191px" width="15" height="15" viewBox="0 0 15 15"><circle cx="7.5" cy="7.5" r="7.3" fill="#26c9a8"/><circle cx="7.5" cy="7.5" r="6" fill="#1aa5c8"/><rect x="5" y="4" width="5" height="7" rx="1" fill="none" stroke="#fff" stroke-width="1"/></svg>
<div class="t" style="left:1299.4px;top:192.8px;font-size:11.5px;line-height:14px;color:#303030;letter-spacing:0.213px;">Filtrar por Auditoria</div>
<svg style="left:1267px;top:210px" width="10" height="10" viewBox="0 0 10 10"><rect x="0.5" y="0.5" width="8" height="8" fill="#fff" stroke="#a8a8a8"/><path d="M2.5 4.5h4" stroke="#3a4aa0" stroke-width="1"/><path d="M4.5 2.5v4" stroke="#3a4aa0" stroke-width="1"/></svg>
<div class="a" style="left:1276px;top:214px;width:7px;height:1px;background:repeating-linear-gradient(90deg,#b8b8b8 0 1px,transparent 1px 2px)"></div>
<svg style="left:1283px;top:208px" width="11" height="13" viewBox="0 0 11 13"><path d="M0 0h11l-4 5v8h-3V5z" fill="#3a9a8a"/><path d="M0 0h11l-4 5h-3z" fill="#5ab8a8"/></svg>
<div class="t" style="left:1299.4px;top:207.9px;font-size:11.5px;line-height:14px;color:#303030;letter-spacing:0.230px;">Filtrar por Manifestação</div>
<svg style="left:1267px;top:225px" width="10" height="10" viewBox="0 0 10 10"><rect x="0.5" y="0.5" width="8" height="8" fill="#fff" stroke="#a8a8a8"/><path d="M2.5 4.5h4" stroke="#3a4aa0" stroke-width="1"/><path d="M4.5 2.5v4" stroke="#3a4aa0" stroke-width="1"/></svg>
<div class="a" style="left:1276px;top:229px;width:7px;height:1px;background:repeating-linear-gradient(90deg,#b8b8b8 0 1px,transparent 1px 2px)"></div>
<svg style="left:1283px;top:223px" width="11" height="13" viewBox="0 0 11 13"><path d="M0 0h11l-4 5v8h-3V5z" fill="#3a9a8a"/><path d="M0 0h11l-4 5h-3z" fill="#5ab8a8"/></svg>
<div class="t" style="left:1299.4px;top:222.9px;font-size:11.5px;line-height:14px;color:#303030;letter-spacing:0.238px;">Filtrar por Operações</div>
<svg style="left:1267px;top:240px" width="10" height="10" viewBox="0 0 10 10"><rect x="0.5" y="0.5" width="8" height="8" fill="#fff" stroke="#a8a8a8"/><path d="M2.5 4.5h4" stroke="#3a4aa0" stroke-width="1"/><path d="M4.5 2.5v4" stroke="#3a4aa0" stroke-width="1"/></svg>
<div class="a" style="left:1276px;top:244px;width:7px;height:1px;background:repeating-linear-gradient(90deg,#b8b8b8 0 1px,transparent 1px 2px)"></div>
<svg style="left:1283px;top:237px" width="13" height="13" viewBox="0 0 13 13"><rect x="0.5" y="0.5" width="12" height="12" fill="none" stroke="#3aa0f0" stroke-dasharray="2 2"/><rect x="3" y="4" width="6" height="6" fill="#f6a020"/><rect x="5" y="6" width="5" height="5" fill="#f6d020"/></svg>
<div class="t" style="left:1299.4px;top:237.9px;font-size:11.5px;line-height:14px;color:#303030;letter-spacing:0.303px;">Agrupamento</div>
<svg style="left:1267px;top:255px" width="10" height="10" viewBox="0 0 10 10"><rect x="0.5" y="0.5" width="8" height="8" fill="#fff" stroke="#a8a8a8"/><path d="M2.5 4.5h4" stroke="#3a4aa0" stroke-width="1"/></svg>
<div class="a" style="left:1276px;top:259px;width:7px;height:1px;background:repeating-linear-gradient(90deg,#b8b8b8 0 1px,transparent 1px 2px)"></div>
<svg style="left:1282px;top:251px" width="14" height="15" viewBox="0 0 14 15"><rect x="1" y="1" width="8" height="13" fill="#fff" stroke="#1a2ad8" stroke-width="2"/><path d="M3 4h5M3 7h5M3 10h5" stroke="#f0a040" stroke-width="2"/><rect x="8" y="8" width="6" height="7" fill="#f8c070"/><path d="M9 11h4M9 13h4" stroke="#e04a2a" stroke-width="1"/></svg>
<div class="t" style="left:1299.4px;top:253.0px;font-size:11.5px;line-height:14px;color:#303030;letter-spacing:0.252px;">Relatórios</div>
<div class="a" style="left:1289px;top:265px;width:1px;height:341px;background:repeating-linear-gradient(#b8b8b8 0 1px,transparent 1px 2px)"></div>
<div class="a" style="left:1300px;top:0;width:171px;height:864px;overflow:hidden;pointer-events:none">
</div>
<div class="a" style="left:1290px;top:274px;width:10px;height:1px;background:repeating-linear-gradient(90deg,#b8b8b8 0 1px,transparent 1px 2px)"></div>
<div class="a" style="left:1305.5px;top:272.5px;width:4.0px;height:4.0px;background:#111;border-radius:50%"></div>
<div class="t" style="left:1317.7px;top:268.0px;font-size:11.5px;line-height:14px;color:#303030;letter-spacing:0.232px;">Emitidos por terceiros</div>
<div class="a" style="left:1290px;top:289px;width:10px;height:1px;background:repeating-linear-gradient(90deg,#b8b8b8 0 1px,transparent 1px 2px)"></div>
<div class="a" style="left:1305.5px;top:287.5px;width:4.0px;height:4.0px;background:#111;border-radius:50%"></div>
<div class="t" style="left:1317.7px;top:283.0px;font-size:11.5px;line-height:14px;color:#303030;letter-spacing:0.256px;">Emitidos pela empresa</div>
<div class="a" style="left:1290px;top:304px;width:10px;height:1px;background:repeating-linear-gradient(90deg,#b8b8b8 0 1px,transparent 1px 2px)"></div>
<svg style="left:1302px;top:302px" width="10" height="8" viewBox="0 0 10 8"><path d="M1 4l2.5 3 5-6" stroke="#22a822" stroke-width="2" fill="none"/></svg>
<div class="t" style="left:1317.7px;top:298.1px;font-size:11.5px;line-height:14px;color:#303030;letter-spacing:0.240px;">NFe : Dados sintéticos</div>
<div class="a" style="left:1290px;top:319px;width:10px;height:1px;background:repeating-linear-gradient(90deg,#b8b8b8 0 1px,transparent 1px 2px)"></div>
<svg style="left:1302px;top:317px" width="10" height="8" viewBox="0 0 10 8"><path d="M1 4l2.5 3 5-6" stroke="#22a822" stroke-width="2" fill="none"/></svg>
<div class="t" style="left:1317.7px;top:313.1px;font-size:11.5px;line-height:14px;color:#303030;letter-spacing:0.242px;">NFe : Dados analíticos</div>
<div class="a" style="left:1290px;top:334px;width:10px;height:1px;background:repeating-linear-gradient(90deg,#b8b8b8 0 1px,transparent 1px 2px)"></div>
<svg style="left:1302px;top:332px" width="10" height="8" viewBox="0 0 10 8"><path d="M1 4l2.5 3 5-6" stroke="#22a822" stroke-width="2" fill="none"/></svg>
<div class="t" style="left:1317.7px;top:328.1px;font-size:11.5px;line-height:14px;color:#303030;letter-spacing:0.238px;">CTe : Dados sintéticos</div>
<div class="a" style="left:1290px;top:349px;width:10px;height:1px;background:repeating-linear-gradient(90deg,#b8b8b8 0 1px,transparent 1px 2px)"></div>
<svg style="left:1302px;top:347px" width="10" height="8" viewBox="0 0 10 8"><path d="M1 4l2.5 3 5-6" stroke="#22a822" stroke-width="2" fill="none"/></svg>
<div class="t" style="left:1317.7px;top:343.1px;font-size:11.5px;line-height:14px;color:#303030;letter-spacing:0.240px;">CTe : Dados analíticos</div>
<div class="a" style="left:1290px;top:364px;width:10px;height:1px;background:repeating-linear-gradient(90deg,#b8b8b8 0 1px,transparent 1px 2px)"></div>
<svg style="left:1302px;top:362px" width="10" height="8" viewBox="0 0 10 8"><path d="M1 4l2.5 3 5-6" stroke="#22a822" stroke-width="2" fill="none"/></svg>
<div class="t" style="left:1317.7px;top:358.2px;font-size:11.5px;line-height:14px;color:#303030;letter-spacing:0.273px;">Docs cancelados</div>
<div class="a" style="left:1290px;top:379px;width:10px;height:1px;background:repeating-linear-gradient(90deg,#b8b8b8 0 1px,transparent 1px 2px)"></div>
<svg style="left:1302px;top:377px" width="10" height="8" viewBox="0 0 10 8"><path d="M1 4l2.5 3 5-6" stroke="#22a822" stroke-width="2" fill="none"/></svg>
<div class="t" style="left:1317.7px;top:373.2px;font-size:11.5px;line-height:14px;color:#303030;letter-spacing:0.259px;">Cartas de Correção</div>
<div class="a" style="left:1290px;top:394px;width:10px;height:1px;background:repeating-linear-gradient(90deg,#b8b8b8 0 1px,transparent 1px 2px)"></div>
<svg style="left:1302px;top:392px" width="10" height="8" viewBox="0 0 10 8"><path d="M1 4l2.5 3 5-6" stroke="#22a822" stroke-width="2" fill="none"/></svg>
<div class="t" style="left:1317.7px;top:388.2px;font-size:11.5px;line-height:14px;color:#303030;letter-spacing:0.278px;">Averbação de Embarque</div>
<div class="a" style="left:1290px;top:409px;width:10px;height:1px;background:repeating-linear-gradient(90deg,#b8b8b8 0 1px,transparent 1px 2px)"></div>
<svg style="left:1302px;top:407px" width="10" height="8" viewBox="0 0 10 8"><path d="M1 4l2.5 3 5-6" stroke="#22a822" stroke-width="2" fill="none"/></svg>
<div class="t" style="left:1317.7px;top:403.3px;font-size:11.5px;line-height:14px;color:#303030;letter-spacing:0.230px;">Export.Indireta : Saldos e Prazos</div>
<div class="a" style="left:1290px;top:424px;width:10px;height:1px;background:repeating-linear-gradient(90deg,#b8b8b8 0 1px,transparent 1px 2px)"></div>
<svg style="left:1302px;top:422px" width="10" height="8" viewBox="0 0 10 8"><path d="M1 4l2.5 3 5-6" stroke="#22a822" stroke-width="2" fill="none"/></svg>
<div class="t" style="left:1317.7px;top:418.3px;font-size:11.5px;line-height:14px;color:#303030;letter-spacing:0.240px;">Export.Direta : Formação de Lote</div>
<div class="a" style="left:1290px;top:439px;width:10px;height:1px;background:repeating-linear-gradient(90deg,#b8b8b8 0 1px,transparent 1px 2px)"></div>
<svg style="left:1302px;top:437px" width="10" height="8" viewBox="0 0 10 8"><path d="M1 4l2.5 3 5-6" stroke="#22a822" stroke-width="2" fill="none"/></svg>
<div class="t" style="left:1317.7px;top:433.3px;font-size:11.5px;line-height:14px;color:#303030;letter-spacing:0.238px;">Export.Geral : Saldos e Prazos</div>
<div class="a" style="left:1290px;top:454px;width:10px;height:1px;background:repeating-linear-gradient(90deg,#b8b8b8 0 1px,transparent 1px 2px)"></div>
<svg style="left:1302px;top:452px" width="10" height="8" viewBox="0 0 10 8"><path d="M1 4l2.5 3 5-6" stroke="#22a822" stroke-width="2" fill="none"/></svg>
<div class="t" style="left:1317.7px;top:448.4px;font-size:11.5px;line-height:14px;color:#303030;letter-spacing:0.262px;">NFe pendentes transp</div>
<div class="a" style="left:1290px;top:469px;width:10px;height:1px;background:repeating-linear-gradient(90deg,#b8b8b8 0 1px,transparent 1px 2px)"></div>
<svg style="left:1302px;top:467px" width="10" height="8" viewBox="0 0 10 8"><path d="M1 4l2.5 3 5-6" stroke="#22a822" stroke-width="2" fill="none"/></svg>
<div class="t" style="left:1317.7px;top:463.4px;font-size:11.5px;line-height:14px;color:#303030;letter-spacing:0.250px;">CTe incorretos</div>
<div class="a" style="left:1290px;top:484px;width:10px;height:1px;background:repeating-linear-gradient(90deg,#b8b8b8 0 1px,transparent 1px 2px)"></div>
<svg style="left:1302px;top:482px" width="10" height="8" viewBox="0 0 10 8"><path d="M1 4l2.5 3 5-6" stroke="#22a822" stroke-width="2" fill="none"/></svg>
<div class="t" style="left:1317.7px;top:478.4px;font-size:11.5px;line-height:14px;color:#303030;letter-spacing:0.257px;">CTe cobrança duplicada</div>
<div class="a" style="left:1290px;top:499px;width:10px;height:1px;background:repeating-linear-gradient(90deg,#b8b8b8 0 1px,transparent 1px 2px)"></div>
<svg style="left:1302px;top:497px" width="10" height="8" viewBox="0 0 10 8"><path d="M1 4l2.5 3 5-6" stroke="#22a822" stroke-width="2" fill="none"/></svg>
<div class="t" style="left:1317.7px;top:493.4px;font-size:11.5px;line-height:14px;color:#303030;letter-spacing:0.267px;">Notas de Devolução</div>
<div class="a" style="left:1290px;top:514px;width:10px;height:1px;background:repeating-linear-gradient(90deg,#b8b8b8 0 1px,transparent 1px 2px)"></div>
<svg style="left:1302px;top:512px" width="10" height="8" viewBox="0 0 10 8"><path d="M1 4l2.5 3 5-6" stroke="#22a822" stroke-width="2" fill="none"/></svg>
<div class="t" style="left:1317.7px;top:508.5px;font-size:11.5px;line-height:14px;color:#303030;letter-spacing:0.270px;">Dev CNPJ próprio</div>
<div class="a" style="left:1290px;top:530px;width:10px;height:1px;background:repeating-linear-gradient(90deg,#b8b8b8 0 1px,transparent 1px 2px)"></div>
<svg style="left:1302px;top:528px" width="10" height="8" viewBox="0 0 10 8"><path d="M1 4l2.5 3 5-6" stroke="#22a822" stroke-width="2" fill="none"/></svg>
<div class="t" style="left:1317.7px;top:523.5px;font-size:11.5px;line-height:14px;color:#303030;letter-spacing:0.270px;">Notas recusadas</div>
<div class="a" style="left:1290px;top:545px;width:10px;height:1px;background:repeating-linear-gradient(90deg,#b8b8b8 0 1px,transparent 1px 2px)"></div>
<svg style="left:1302px;top:543px" width="10" height="8" viewBox="0 0 10 8"><path d="M1 4l2.5 3 5-6" stroke="#22a822" stroke-width="2" fill="none"/></svg>
<div class="t" style="left:1317.7px;top:538.5px;font-size:11.5px;line-height:14px;color:#303030;letter-spacing:0.259px;">Mercadorias entregues</div>
<div class="a" style="left:1290px;top:560px;width:10px;height:1px;background:repeating-linear-gradient(90deg,#b8b8b8 0 1px,transparent 1px 2px)"></div>
<svg style="left:1302px;top:558px" width="10" height="8" viewBox="0 0 10 8"><path d="M1 4l2.5 3 5-6" stroke="#22a822" stroke-width="2" fill="none"/></svg>
<div class="t" style="left:1317.7px;top:553.6px;font-size:11.5px;line-height:14px;color:#303030;letter-spacing:0.259px;">NFe pendentes coleta</div>
<div class="a" style="left:1290px;top:575px;width:10px;height:1px;background:repeating-linear-gradient(90deg,#b8b8b8 0 1px,transparent 1px 2px)"></div>
<svg style="left:1302px;top:573px" width="10" height="8" viewBox="0 0 10 8"><path d="M1 4l2.5 3 5-6" stroke="#22a822" stroke-width="2" fill="none"/></svg>
<div class="t" style="left:1317.7px;top:568.6px;font-size:11.5px;line-height:14px;color:#303030;letter-spacing:0.266px;">NFe pendente entrega</div>
<div class="a" style="left:1290px;top:590px;width:10px;height:1px;background:repeating-linear-gradient(90deg,#b8b8b8 0 1px,transparent 1px 2px)"></div>
<svg style="left:1302px;top:588px" width="10" height="8" viewBox="0 0 10 8"><path d="M1 4l2.5 3 5-6" stroke="#22a822" stroke-width="2" fill="none"/></svg>
<div class="t" style="left:1317.7px;top:583.6px;font-size:11.5px;line-height:14px;color:#303030;letter-spacing:0.282px;">CTe em desacordo</div>
<div class="a" style="left:1290px;top:605px;width:10px;height:1px;background:repeating-linear-gradient(90deg,#b8b8b8 0 1px,transparent 1px 2px)"></div>
<div class="a" style="left:1305.5px;top:603.5px;width:4.0px;height:4.0px;background:#111;border-radius:50%"></div>
<div class="t" style="left:1317.7px;top:598.7px;font-size:11.5px;line-height:14px;color:#303030;letter-spacing:0.252px;">Parceiros Comerciais</div>
<div class="a" style="left:1471px;top:116px;width:51px;height:524px;background:#343434"></div>
<div class="a" style="left:1260px;top:620px;width:211px;height:17px;background:#f0f0f0"></div>
<div class="a" style="left:1276px;top:629px;width:155px;height:3px;background:#8a8a8a;border-radius:1px"></div>
<div class="a" style="left:1258px;top:639px;width:213px;height:5px;background:#f0f0f0"></div>
<div class="a" style="left:1259px;top:643px;width:212px;height:156px;background:#fff;border-left:1px solid #c4c8cc;border-top:2px solid #b4bcc4"></div>
<svg style="left:1263px;top:647px" width="18" height="19" viewBox="0 0 18 19"><circle cx="8" cy="8" r="7.5" fill="#3a4a5a"/><circle cx="8" cy="7" r="3.5" fill="#e8ecf0"/><path d="M2 14q6-6 12 0" fill="#e8ecf0"/><path d="M14 12l1 2.2 2.3.2-1.8 1.5.6 2.3-2.1-1.3-2 1.3.6-2.3-1.8-1.5 2.3-.2z" fill="#f6c020"/></svg>
<div class="t" style="left:1291.4px;top:650.5px;font-size:11.5px;line-height:14px;color:#4a4ae6;letter-spacing:0.338px;">[ Dados de usuário e créditos ]</div>
<div class="a" style="left:1260px;top:671px;width:211px;height:2px;background:#e2e2e2"></div>
<div class="a" style="left:1260px;top:673px;width:211px;height:55px;background:linear-gradient(90deg,#f4f4f4,#fff 40%)"></div>
<div class="t" style="left:1304.4px;top:682.5px;font-size:12px;line-height:14px;color:#2222d8;font-weight:bold;letter-spacing:-0.146px;">Plano : ENTERPRISE</div>
<div class="t" style="left:1299.9px;top:703.0px;font-size:11.5px;line-height:14px;color:#4a4ae6;letter-spacing:0.351px;">[ Gerenciar assinatura ]</div>
<div class="a" style="left:1260px;top:727px;width:211px;height:2px;background:#e2e2e2"></div>
<div class="t" style="left:1270.9px;top:735.0px;font-size:11.5px;line-height:14px;color:#4a4ae6;letter-spacing:0.215px;">Créditos especiais : R$ 2.880,5500</div>
<div class="a" style="left:1260px;top:753px;width:211px;height:2px;background:#e2e2e2"></div>
<svg style="left:1267px;top:758px" width="32" height="38" viewBox="0 0 32 38"><g transform="scale(1.9)"><path d="M3 8Q3 1.5 8.5 1.5Q14 1.5 14 8V14H3Z" fill="#b47c4a"/><ellipse cx="8.5" cy="8.3" rx="3.9" ry="4.6" fill="#f4c8a8"/><path d="M4.6 7Q6 3 9.8 3.4Q12.6 3.8 12.8 7.5Q10.5 4.8 4.6 7Z" fill="#b47c4a"/><rect x="7.2" y="11.8" width="2.6" height="3" fill="#d8a888"/><path d="M3.3 8.5A5.2 5.8 0 0 1 13.7 8.5" stroke="#333" stroke-width="1.1" fill="none"/><rect x="2.2" y="7.3" width="2" height="3.4" rx="1" fill="#333"/><rect x="12.8" y="7.3" width="2" height="3.4" rx="1" fill="#333"/><path d="M13.6 10.5Q13 12.6 10 12.8" stroke="#333" stroke-width="0.9" fill="none"/><ellipse cx="9.5" cy="12.8" rx="1.3" ry="0.8" fill="#333"/><path d="M1 20Q1.3 14.6 6 14.2L8.5 19.6L11 14.2Q15.7 14.6 16 20Z" fill="#3a96dc"/><path d="M5.6 14.3L8.5 17L11.4 14.3L10.2 14L8.5 16L6.8 14Z" fill="#fff"/></g></svg>
<div class="t" style="left:1316.9px;top:763.8px;font-size:13.5px;line-height:16px;color:#4646e0;letter-spacing:0.292px;">Iniciar bate papo com</div>
<div class="t" style="left:1330.4px;top:778.3px;font-size:13.5px;line-height:16px;color:#4646e0;letter-spacing:0.203px;">o time da Fiscal.io</div>
<div class="a" style="left:275px;top:292px;width:977px;height:470px;background:#fbfbfb;border:1px solid #bcbcbc;border-radius:8px;box-shadow:0 2px 8px rgba(0,0,0,.25)"></div>
<div class="a" style="left:276px;top:293px;width:975px;height:28px;background:#f3f3f3;border-radius:7px 7px 0 0"></div>
<svg style="left:281px;top:298px" width="16" height="17" viewBox="0 0 16 17"><rect x="1" y="1.2" width="14.4" height="14.6" rx="2" fill="#fff"/><path d="M5 6V12.8H11V8.3" stroke="#1a4fd8" stroke-width="1.8" fill="none" stroke-linejoin="round"/><path d="M7.25 10.8V4.8Q7.25 3.9 8.2 3.9H11.9M4 7H10" stroke="#1a4fd8" stroke-width="1.6" fill="none"/></svg>
<div class="t" style="left:300.4px;top:301.0px;font-size:11.5px;line-height:14px;color:#8a8a8a;letter-spacing:-0.230px;">Fiscal.io - Visualizador de Documentos</div>
<div class="a" style="left:1137px;top:307px;width:9px;height:1px;background:#999"></div>
<svg style="left:1180px;top:302px" width="11" height="11" viewBox="0 0 11 11"><rect x="0.5" y="0.5" width="9.5" height="9.5" fill="none" stroke="#888"/></svg>
<svg style="left:1224px;top:302px" width="11" height="11" viewBox="0 0 11 11"><path d="M0.5 0.5L10.5 10.5M10.5 0.5L0.5 10.5" stroke="#777" stroke-width="1.1"/></svg>
<div class="a" style="left:276px;top:321px;width:975px;height:133px;background:#fff;border-top:2px solid #b9bdc2;border-bottom:2px solid #c4c8cc;border-left:1px solid #c4c8cc"></div>
<div class="a" style="left:303px;top:325px;width:1px;height:19px;background:#ececec"></div>
<div class="a" style="left:378px;top:325px;width:1px;height:19px;background:#ececec"></div>
<div class="a" style="left:420px;top:325px;width:1px;height:19px;background:#ececec"></div>
<div class="a" style="left:607px;top:325px;width:1px;height:19px;background:#ececec"></div>
<div class="a" style="left:678px;top:325px;width:1px;height:19px;background:#ececec"></div>
<div class="a" style="left:714px;top:325px;width:1px;height:19px;background:#ececec"></div>
<div class="a" style="left:789px;top:325px;width:1px;height:19px;background:#ececec"></div>
<div class="a" style="left:850px;top:325px;width:1px;height:19px;background:#ececec"></div>
<div class="a" style="left:925px;top:325px;width:1px;height:19px;background:#ececec"></div>
<div class="a" style="left:1112px;top:325px;width:1px;height:19px;background:#ececec"></div>
<div class="a" style="left:1140px;top:325px;width:1px;height:19px;background:#ececec"></div>
<div class="a" style="left:1168px;top:325px;width:1px;height:19px;background:#ececec"></div>
<div class="a" style="left:1197px;top:325px;width:1px;height:19px;background:#ececec"></div>
<div class="a" style="left:1200px;top:325px;width:1px;height:19px;background:#ececec"></div>
<div class="a" style="left:1206px;top:325px;width:1px;height:19px;background:#ececec"></div>
<div class="a" style="left:1212px;top:325px;width:1px;height:19px;background:#ececec"></div>
<div class="a" style="left:1217px;top:325px;width:1px;height:19px;background:#ececec"></div>
<div class="t" style="left:308.9px;top:328.0px;font-size:11.5px;line-height:14px;color:#333;letter-spacing:0.152px;">Documento</div>
<div class="t" style="left:384.9px;top:328.0px;font-size:11.5px;line-height:14px;color:#333;letter-spacing:0.164px;">Serie</div>
<div class="t" style="left:426.4px;top:328.0px;font-size:11.5px;line-height:14px;color:#333;letter-spacing:0.016px;">Tipo</div>
<div class="t" style="left:624.9px;top:328.0px;font-size:11.5px;line-height:14px;color:#333;letter-spacing:0.044px;">Evento</div>
<div class="t" style="left:685.9px;top:328.0px;font-size:11.5px;line-height:14px;color:#333;letter-spacing:-0.547px;">Seq.</div>
<div class="t" style="left:739.9px;top:328.0px;font-size:11.5px;line-height:14px;color:#333;letter-spacing:-0.260px;">Data</div>
<div class="t" style="left:806.4px;top:328.0px;font-size:11.5px;line-height:14px;color:#333;letter-spacing:0.026px;">Hora</div>
<div class="t" style="left:861.9px;top:328.0px;font-size:11.5px;line-height:14px;color:#333;letter-spacing:0.117px;">Protocolo</div>
<div class="t" style="left:930.4px;top:328.0px;font-size:11.5px;line-height:14px;color:#333;letter-spacing:0.284px;">Status</div>
<div class="t" style="left:1116.4px;top:328.0px;font-size:11.5px;line-height:14px;color:#333;letter-spacing:0.708px;">D...</div>
<div class="t" style="left:1144.4px;top:328.0px;font-size:11.5px;line-height:14px;color:#333;letter-spacing:0.708px;">D...</div>
<div class="t" style="left:1172.9px;top:328.0px;font-size:11.5px;line-height:14px;color:#333;letter-spacing:0.708px;">D...</div>
<div class="a" style="left:295px;top:346px;width:926px;height:16px;background:#efefef"></div>
<svg style="left:280px;top:346px" width="15" height="15" viewBox="0 0 15 15"><circle cx="7.5" cy="7.5" r="7.1" fill="#4aa88a"/><text x="7.5" y="9.3" font-size="5.0" font-weight="bold" font-family="Liberation Sans" fill="#e8ffe8" text-anchor="middle">XML</text></svg>
<svg style="left:280px;top:363px" width="15" height="15" viewBox="0 0 15 15"><circle cx="7.5" cy="7.5" r="7.1" fill="#5cc070"/><text x="7.5" y="9.3" font-size="5.0" font-weight="bold" font-family="Liberation Sans" fill="#e8ffe8" text-anchor="middle">XML</text></svg>
<div class="t" style="left:308.9px;top:348.0px;font-size:11.5px;line-height:14px;color:#303030;letter-spacing:0.123px;">000000010</div>
<div class="t" style="left:395.9px;top:348.0px;font-size:12px;line-height:14px;color:#303030;">1</div>
<div class="t" style="left:426.4px;top:348.0px;font-size:11.5px;line-height:14px;color:#303030;letter-spacing:0.032px;">Nota Fiscal Eletrônica</div>
<div class="t" style="left:721.4px;top:348.0px;font-size:11.5px;line-height:14px;color:#303030;letter-spacing:0.222px;">2023.02.04</div>
<div class="t" style="left:794.9px;top:348.0px;font-size:11.5px;line-height:14px;color:#303030;letter-spacing:0.663px;">11:31:56</div>
<div class="t" style="left:855.4px;top:348.0px;font-size:11.5px;line-height:14px;color:#303030;letter-spacing:0.281px;">34223002...</div>
<div class="t" style="left:930.4px;top:348.0px;font-size:11.5px;line-height:14px;color:#303030;letter-spacing:0.154px;">Autorizado o uso da NF-e</div>
<div class="t" style="left:1116.4px;top:348.0px;font-size:11.5px;line-height:14px;color:#303030;letter-spacing:0.589px;">S...</div>
<div class="t" style="left:1144.4px;top:348.0px;font-size:11.5px;line-height:14px;color:#303030;letter-spacing:1.016px;">2...</div>
<div class="t" style="left:1172.9px;top:348.0px;font-size:11.5px;line-height:14px;color:#303030;letter-spacing:1.016px;">0...</div>
<div class="t" style="left:308.9px;top:363.8px;font-size:11.5px;line-height:14px;color:#303030;letter-spacing:0.123px;">000000010</div>
<div class="t" style="left:395.9px;top:363.8px;font-size:12px;line-height:14px;color:#303030;">1</div>
<div class="t" style="left:426.4px;top:363.8px;font-size:11.5px;line-height:14px;color:#303030;letter-spacing:0.232px;">Registro de Autorização de CT...</div>
<div class="t" style="left:622.4px;top:363.8px;font-size:11.5px;line-height:14px;color:#303030;letter-spacing:0.231px;">610600</div>
<div class="t" style="left:691.9px;top:363.8px;font-size:12px;line-height:14px;color:#303030;">1</div>
<div class="t" style="left:721.4px;top:363.8px;font-size:11.5px;line-height:14px;color:#303030;letter-spacing:0.222px;">2023.02.04</div>
<div class="t" style="left:794.9px;top:363.8px;font-size:11.5px;line-height:14px;color:#303030;letter-spacing:0.540px;">15:58:59</div>
<div class="t" style="left:855.4px;top:363.8px;font-size:11.5px;line-height:14px;color:#303030;letter-spacing:0.281px;">89123075...</div>
<div class="t" style="left:1116.4px;top:363.8px;font-size:11.5px;line-height:14px;color:#303030;letter-spacing:0.589px;">S...</div>
<div class="t" style="left:1144.4px;top:363.8px;font-size:11.5px;line-height:14px;color:#303030;letter-spacing:1.016px;">2...</div>
<div class="t" style="left:1172.9px;top:363.8px;font-size:11.5px;line-height:14px;color:#303030;letter-spacing:1.016px;">0...</div>
<div class="a" style="left:276px;top:454px;width:975px;height:27px;background:linear-gradient(#f8f8f8,#f2f2f2)"></div>
<div class="a" style="left:278px;top:460px;width:2px;height:16px;background:repeating-linear-gradient(#999 0 1px,transparent 1px 3px)"></div>
<svg style="left:284px;top:461px" width="17" height="14" viewBox="0 0 17 14"><rect x="0.8" y="0.8" width="15.4" height="12.4" fill="#f6a44a" stroke="#3a3a5a" stroke-width="1.2"/><path d="M1 1l7.5 6.5L16 1" stroke="#3a3a5a" stroke-width="1.2" fill="#fbc88a"/></svg>
<div class="t" style="left:302.9px;top:461.5px;font-size:13px;line-height:16px;color:#303030;letter-spacing:-0.030px;">Enviar por email</div>
<div class="a" style="left:406px;top:461px;width:1px;height:16px;background:#d0d0d0"></div>
<svg style="left:411px;top:460px" width="16" height="16" viewBox="0 0 16 16"><circle cx="8" cy="8" r="7.6" fill="#22aac8"/><circle cx="8" cy="6" r="3" fill="#fff"/><rect x="4" y="8" width="8" height="4" fill="#fff"/><rect x="5" y="9" width="6" height="2" fill="#22aac8"/></svg>
<div class="t" style="left:428.9px;top:461.5px;font-size:13px;line-height:16px;color:#303030;letter-spacing:-0.283px;">Exportar XML + PDF</div>
<div class="a" style="left:552px;top:461px;width:1px;height:16px;background:#d0d0d0"></div>
<svg style="left:557px;top:461px" width="16" height="15" viewBox="0 0 16 15"><path d="M3 1h8l3 3v3H3z" fill="#fff" stroke="#8a94a8" stroke-width="0.9"/><rect x="1" y="6" width="14" height="7" rx="1.5" fill="#4a5a8a"/><text x="8" y="11.8" font-size="5.5" font-weight="bold" font-family="Liberation Sans" fill="#fff" text-anchor="middle">PDF</text></svg>
<div class="t" style="left:575.4px;top:461.5px;font-size:13px;line-height:16px;color:#303030;letter-spacing:-0.250px;">Exportar PDF</div>
<div class="a" style="left:661px;top:461px;width:1px;height:16px;background:#d0d0d0"></div>
<svg style="left:666px;top:461px" width="15" height="15" viewBox="0 0 15 15"><circle cx="7.5" cy="7.5" r="7.2" fill="#3cb4f2"/><text x="7.5" y="9.3" font-size="5" font-weight="bold" font-family="Liberation Sans" fill="#fff" text-anchor="middle">XML</text></svg>
<div class="t" style="left:683.4px;top:461.5px;font-size:13px;line-height:16px;color:#303030;letter-spacing:-0.226px;">Exportar XML</div>
<div class="a" style="left:770px;top:461px;width:1px;height:16px;background:#d0d0d0"></div>
<svg style="left:774px;top:462px" width="16" height="13" viewBox="0 0 16 13"><rect x="0" y="1" width="10" height="8" fill="#f08a1a"/><path d="M10 3h3l3 3v4h-6z" fill="#e07010"/><circle cx="4" cy="10.5" r="2" fill="#333"/><circle cx="12.5" cy="10.5" r="2" fill="#333"/></svg>
<div class="t" style="left:791.9px;top:461.5px;font-size:13px;line-height:16px;color:#303030;letter-spacing:-0.836px;">EDI</div>
<svg style="left:818px;top:467.0px" width="6" height="4" viewBox="0 0 6 4"><path d="M0 0.5H6L3 3.5Z" fill="#333"/></svg>
<div class="a" style="left:830px;top:461px;width:1px;height:16px;background:#d0d0d0"></div>
<svg style="left:835px;top:461px" width="15" height="15" viewBox="0 0 15 15"><rect x="6" y="3" width="9" height="10" fill="#fff" stroke="#9ccf9c"/><path d="M0 2l8-2v15L0 13z" fill="#1f7a3e"/><path d="M2.5 5l3 5M5.5 5l-3 5" stroke="#fff" stroke-width="1.2"/></svg>
<div class="a" style="left:276px;top:481px;width:975px;height:23px;background:#f0f0f0"></div>
<div class="a" style="left:280px;top:481px;width:50px;height:23px;background:#fdfdfd"></div>
<svg style="left:282px;top:485px" width="16" height="15" viewBox="0 0 16 15"><path d="M3 1h8l3 3v3H3z" fill="#fff" stroke="#8a94a8" stroke-width="0.9"/><rect x="1" y="6" width="14" height="7" rx="1.5" fill="#4a5a8a"/><text x="8" y="11.8" font-size="5.5" font-weight="bold" font-family="Liberation Sans" fill="#fff" text-anchor="middle">PDF</text></svg>
<div class="t" style="left:302.4px;top:486.0px;font-size:11.5px;line-height:14px;color:#303030;letter-spacing:-1.008px;">PDF</div>
<div class="a" style="left:331px;top:482px;width:50px;height:21px;background:#f5f5f5;border-right:1px solid #e2e2e2"></div>
<svg style="left:334px;top:485px" width="15" height="15" viewBox="0 0 15 15"><circle cx="7.5" cy="7.5" r="7.2" fill="#3cb4f2"/><text x="7.5" y="9.3" font-size="5" font-weight="bold" font-family="Liberation Sans" fill="#fff" text-anchor="middle">XML</text></svg>
<div class="t" style="left:354.4px;top:486.0px;font-size:11.5px;line-height:14px;color:#303030;letter-spacing:-1.070px;">XML</div>
<div class="a" style="left:382px;top:482px;width:55px;height:21px;background:#f5f5f5;border-right:1px solid #e2e2e2"></div>
<svg style="left:388px;top:486px" width="15" height="13" viewBox="0 0 15 13"><rect x="0" y="1" width="9" height="8" fill="#f08a1a"/><path d="M9 3h3l3 3v4H9z" fill="#e07010"/><circle cx="3.5" cy="10.5" r="2" fill="#333"/><circle cx="11.5" cy="10.5" r="2" fill="#333"/></svg>
<div class="t" style="left:407.4px;top:486.0px;font-size:11.5px;line-height:14px;color:#303030;letter-spacing:0.414px;">EDI</div>
<div class="a" style="left:438px;top:482px;width:97px;height:21px;background:#f5f5f5;border-right:1px solid #e2e2e2"></div>
<svg style="left:443px;top:484px" width="16" height="16" viewBox="0 0 16 16"><path d="M8 1v14M1 8h14M3 3l10 10M13 3L3 13" stroke="#2a8ad8" stroke-width="1.2"/><circle cx="8" cy="8" r="2.5" fill="#2a8ad8"/><circle cx="8" cy="1.5" r="1.5" fill="#e84a4a"/><circle cx="14.5" cy="8" r="1.5" fill="#f6c020"/><circle cx="1.5" cy="8" r="1.5" fill="#f6c020"/><circle cx="8" cy="14.5" r="1.5" fill="#2a8ad8"/></svg>
<div class="t" style="left:463.4px;top:486.0px;font-size:11.5px;line-height:14px;color:#303030;letter-spacing:0.163px;">Documentos</div>
<div class="a" style="left:536px;top:482px;width:98px;height:21px;background:#f5f5f5;border-right:1px solid #e2e2e2"></div>
<svg style="left:541px;top:484px" width="16" height="16" viewBox="0 0 16 16"><path d="M3 3l9-2 3 11-9 3z" fill="#f6d030" stroke="#8a7010" stroke-width="0.9"/><path d="M5 6l6-1.5M5.5 8.5l6-1.5M6 11l4-1" stroke="#8a7010" stroke-width="0.8"/></svg>
<div class="t" style="left:561.9px;top:486.0px;font-size:11.5px;line-height:14px;color:#303030;letter-spacing:0.283px;">Comentários</div>
<div class="a" style="left:281px;top:504px;width:969px;height:23px;background:linear-gradient(#fdfdfd,#f3f5fa 50%,#dfe5ef)"></div>
<svg style="left:285px;top:507px" width="17" height="17" viewBox="0 0 17 17"><rect x="4" y="1" width="9" height="6" fill="#dce8f8" stroke="#7a8898"/><rect x="1" y="6" width="15" height="7" rx="2" fill="#e0e4e8" stroke="#6a7480"/><rect x="3.5" y="10" width="10" height="6" fill="#fff" stroke="#6a7480"/></svg>
<div class="t" style="left:304.4px;top:510.0px;font-size:11.5px;line-height:14px;color:#303030;letter-spacing:-0.535px;">Print</div>
<svg style="left:336px;top:508px" width="15" height="15" viewBox="0 0 15 15"><rect x="0.7" y="0.7" width="13.6" height="13.6" rx="1.5" fill="#5a90d8" stroke="#2a5aa8"/><rect x="3" y="1" width="8" height="5" fill="#e8f0fa"/><rect x="3" y="9" width="9" height="4" fill="#8ad078"/></svg>
<div class="t" style="left:354.4px;top:510.0px;font-size:11.5px;line-height:14px;color:#303030;letter-spacing:-1.068px;">Save</div>
<svg style="left:388px;top:514.5px" width="6" height="4" viewBox="0 0 6 4"><path d="M0 0.5H6L3 3.5Z" fill="#333"/></svg>
<svg style="left:402px;top:508px" width="15" height="14" viewBox="0 0 15 14"><rect x="0.5" y="4" width="5.5" height="9" rx="1.5" fill="#6a9ac8" stroke="#3a5a88"/><rect x="9" y="4" width="5.5" height="9" rx="1.5" fill="#6a9ac8" stroke="#3a5a88"/><rect x="2" y="0" width="3" height="5" fill="#5a7aa8"/><rect x="10" y="0" width="3" height="5" fill="#5a7aa8"/><rect x="5" y="5" width="5" height="3" fill="#3a5a88"/></svg>
<div class="a" style="left:421px;top:508px;width:1px;height:16px;background:#c8ccd4"></div>
<svg style="left:429px;top:510px" width="11" height="12" viewBox="0 0 11 12"><rect x="0" y="0" width="2.5" height="12" fill="#2a6ad8"/><path d="M11 0v12L3 6z" fill="#2a6ad8"/></svg>
<svg style="left:453px;top:510px" width="7" height="12" viewBox="0 0 7 12"><path d="M7 0v12L0 6z" fill="#2a6ad8"/></svg>
<div class="a" style="left:470px;top:507px;width:38px;height:18px;background:#fff;border:1px solid #a8b0bc"></div>
<div class="t" style="left:498.4px;top:510.0px;font-size:12px;line-height:14px;color:#303030;">1</div>
<div class="t" style="left:510.9px;top:510.0px;font-size:11.5px;line-height:14px;color:#303030;letter-spacing:-0.385px;">of 1</div>
<svg style="left:543px;top:510px" width="7" height="12" viewBox="0 0 7 12"><path d="M0 0v12L7 6z" fill="#2a6ad8"/></svg>
<svg style="left:564px;top:510px" width="11" height="12" viewBox="0 0 11 12"><rect x="8.5" y="0" width="2.5" height="12" fill="#2a6ad8"/><path d="M0 0v12L8 6z" fill="#2a6ad8"/></svg>
<div class="a" style="left:281px;top:527px;width:965px;height:207px;background:linear-gradient(#474747 0%,#464646 70%,#2c2c2c 82%,#0e0e0e 96%,#0a0a0a 100%)"></div>
<div class="a" style="left:382px;top:537px;width:747px;height:197px;background:#fff;border:2px solid #f4c040;border-bottom:none"></div>
<div class="a" style="left:1230px;top:528px;width:15px;height:206px;background:linear-gradient(90deg,#3a3a3a,#454545)"></div>
<svg style="left:1232px;top:532px" width="10" height="6" viewBox="0 0 10 6"><path d="M0 6h10L5 0z" fill="#9a9a9a"/></svg>
<svg style="left:1232px;top:721px" width="10" height="6" viewBox="0 0 10 6"><path d="M0 0h10L5 6z" fill="#9a9a9a"/></svg>
<div class="a" style="left:1232px;top:546px;width:12px;height:30px;background:linear-gradient(90deg,#f4f4f4,#d8d8d8);border:1px solid #888;border-radius:2px"></div>
<div class="a" style="left:1235px;top:557px;width:6px;height:1px;background:#888"></div>
<div class="a" style="left:1235px;top:560px;width:6px;height:1px;background:#888"></div>
<div class="a" style="left:1235px;top:563px;width:6px;height:1px;background:#888"></div>
<div class="a" style="left:404px;top:562px;width:700px;height:65px;border:1px solid #222"></div>
<div class="a" style="left:405px;top:598px;width:603px;height:1px;background:#222"></div>
<div class="a" style="left:1007px;top:563px;width:1px;height:63px;background:#222"></div>
<div class="a" style="left:539px;top:599px;width:1px;height:27px;background:#222"></div>
<div class="t" style="left:407.0px;top:562.5px;font-size:10px;line-height:12px;color:#222;font-family:'Liberation Serif',serif;transform:scaleX(0.8947);transform-origin:0 0;">Recebemos de FRUTAS LTDA os produtos e/ou serviços constantes da Nota Fiscal Eletrônica indicada ao lado.</div>
<div class="t" style="left:407.0px;top:573.0px;font-size:10px;line-height:12px;color:#222;font-family:'Liberation Serif',serif;transform:scaleX(0.8976);transform-origin:0 0;">Emissão:  04/02/2023 Dest/Reme: FRUTAS LTDA Valor Total: R$ 77.000,00</div>
<div class="t" style="left:407.0px;top:600.0px;font-size:8px;line-height:10px;color:#222;font-family:'Liberation Serif',serif;transform:scaleX(0.9609);transform-origin:0 0;">DATA DO RECEBIMENTO</div>
<div class="t" style="left:542.0px;top:600.0px;font-size:8px;line-height:10px;color:#222;font-family:'Liberation Serif',serif;transform:scaleX(0.9570);transform-origin:0 0;">IDENTIFICAÇÃO E ASSINATURA DO RECEBEDOR</div>
<div class="t" style="left:1041.0px;top:571.0px;font-size:13.5px;line-height:16px;color:#111;font-weight:bold;font-family:'Liberation Serif',serif;transform:scaleX(0.9128);transform-origin:0 0;">NF-e</div>
<div class="t" style="left:1014.0px;top:585.5px;font-size:13.5px;line-height:16px;color:#111;font-weight:bold;font-family:'Liberation Serif',serif;transform:scaleX(0.9403);transform-origin:0 0;">Nº 000.000.010</div>
<div class="t" style="left:1029.5px;top:600.0px;font-size:13.5px;line-height:16px;color:#111;font-weight:bold;font-family:'Liberation Serif',serif;transform:scaleX(0.9273);transform-origin:0 0;">Série 001</div>
<div class="a" style="left:404px;top:631px;width:700px;height:1px;background:repeating-linear-gradient(90deg,#999 0 2px,transparent 2px 3px)"></div>
<div class="a" style="left:404px;top:637px;width:700px;height:110px;border:1px solid #222"></div>
<div class="a" style="left:694px;top:638px;width:1px;height:96px;background:#222"></div>
<div class="a" style="left:800px;top:638px;width:1px;height:96px;background:#222"></div>
<div class="a" style="left:801px;top:683px;width:303px;height:1px;background:#222"></div>
<div class="a" style="left:801px;top:712px;width:303px;height:1px;background:#222"></div>
<div class="t" style="left:533.0px;top:655.0px;font-size:14px;line-height:17px;color:#111;font-weight:bold;font-family:'Liberation Serif',serif;transform:scaleX(0.7389);transform-origin:0 0;">FRUTAS LTDA</div>
<div class="t" style="left:506.0px;top:688.0px;font-size:11px;line-height:13px;color:#222;font-family:'Liberation Serif',serif;transform:scaleX(0.7826);transform-origin:0 0;">ESTRDA , SN,  BARRO PRETO,</div>
<div class="t" style="left:536.0px;top:699.0px;font-size:11px;line-height:13px;color:#222;font-family:'Liberation Serif',serif;transform:scaleX(0.7662);transform-origin:0 0;">SANTA SUL - SC</div>
<div class="t" style="left:720.0px;top:638.0px;font-size:17px;line-height:20px;color:#111;font-weight:bold;font-family:'Liberation Serif',serif;transform:scaleX(0.9218);transform-origin:0 0;">DANFE</div>
<div class="t" style="left:702.0px;top:652.0px;font-size:10.5px;line-height:13px;color:#222;font-family:'Liberation Serif',serif;transform:scaleX(0.9436);transform-origin:0 0;">Documento Auxiliar da</div>
<div class="t" style="left:705.0px;top:662.5px;font-size:10.5px;line-height:13px;color:#222;font-family:'Liberation Serif',serif;transform:scaleX(0.9373);transform-origin:0 0;">Nota Fiscal Eletrônica</div>
<div class="t" style="left:701.0px;top:677.5px;font-size:12px;line-height:14px;color:#222;font-family:'Liberation Serif',serif;transform:scaleX(0.8726);transform-origin:0 0;">0 - ENTRADA</div>
<div class="t" style="left:701.0px;top:689.0px;font-size:12px;line-height:14px;color:#222;font-family:'Liberation Serif',serif;transform:scaleX(0.8731);transform-origin:0 0;">1 - SAÍDA</div>
<div class="a" style="left:770px;top:681px;width:21px;height:21px;border:1px solid #222"></div>
<div class="t" style="left:777.5px;top:685.5px;font-size:10px;line-height:12px;color:#111;font-weight:bold;font-family:'Liberation Serif',serif;">1</div>
<div class="t" style="left:701.0px;top:703.5px;font-size:13.5px;line-height:16px;color:#111;font-weight:bold;font-family:'Liberation Serif',serif;transform:scaleX(0.9403);transform-origin:0 0;">Nº 000.000.010</div>
<div class="t" style="left:709.5px;top:716.0px;font-size:14px;line-height:17px;color:#111;font-weight:bold;font-family:'Liberation Serif',serif;transform:scaleX(0.7966);transform-origin:0 0;">SÉRIE 001</div>
<svg style="left:822px;top:642px" width="260" height="36" viewBox="0 0 260 36"><rect x="0" y="0" width="1" height="36" fill="#111"/><rect x="2" y="0" width="2" height="36" fill="#111"/><rect x="5" y="0" width="1" height="36" fill="#111"/><rect x="9" y="0" width="1" height="36" fill="#111"/><rect x="12" y="0" width="2" height="36" fill="#111"/><rect x="15" y="0" width="2" height="36" fill="#111"/><rect x="18" y="0" width="1" height="36" fill="#111"/><rect x="20" y="0" width="2" height="36" fill="#111"/><rect x="24" y="0" width="1" height="36" fill="#111"/><rect x="26" y="0" width="1" height="36" fill="#111"/><rect x="30" y="0" width="2" height="36" fill="#111"/><rect x="33" y="0" width="2" height="36" fill="#111"/><rect x="36" y="0" width="1" height="36" fill="#111"/><rect x="40" y="0" width="1" height="36" fill="#111"/><rect x="44" y="0" width="2" height="36" fill="#111"/><rect x="48" y="0" width="1" height="36" fill="#111"/><rect x="50" y="0" width="1" height="36" fill="#111"/><rect x="54" y="0" width="1" height="36" fill="#111"/><rect x="57" y="0" width="2" height="36" fill="#111"/><rect x="60" y="0" width="2" height="36" fill="#111"/><rect x="63" y="0" width="2" height="36" fill="#111"/><rect x="67" y="0" width="2" height="36" fill="#111"/><rect x="70" y="0" width="1" height="36" fill="#111"/><rect x="74" y="0" width="2" height="36" fill="#111"/><rect x="77" y="0" width="1" height="36" fill="#111"/><rect x="79" y="0" width="2" height="36" fill="#111"/><rect x="82" y="0" width="2" height="36" fill="#111"/><rect x="85" y="0" width="2" height="36" fill="#111"/><rect x="88" y="0" width="2" height="36" fill="#111"/><rect x="93" y="0" width="2" height="36" fill="#111"/><rect x="97" y="0" width="2" height="36" fill="#111"/><rect x="102" y="0" width="2" height="36" fill="#111"/><rect x="106" y="0" width="1" height="36" fill="#111"/><rect x="108" y="0" width="1" height="36" fill="#111"/><rect x="110" y="0" width="1" height="36" fill="#111"/><rect x="114" y="0" width="1" height="36" fill="#111"/><rect x="118" y="0" width="2" height="36" fill="#111"/><rect x="122" y="0" width="3" height="36" fill="#111"/><rect x="127" y="0" width="1" height="36" fill="#111"/><rect x="131" y="0" width="1" height="36" fill="#111"/><rect x="133" y="0" width="2" height="36" fill="#111"/><rect x="137" y="0" width="1" height="36" fill="#111"/><rect x="140" y="0" width="1" height="36" fill="#111"/><rect x="143" y="0" width="2" height="36" fill="#111"/><rect x="146" y="0" width="3" height="36" fill="#111"/><rect x="150" y="0" width="2" height="36" fill="#111"/><rect x="155" y="0" width="1" height="36" fill="#111"/><rect x="158" y="0" width="3" height="36" fill="#111"/><rect x="163" y="0" width="2" height="36" fill="#111"/><rect x="167" y="0" width="2" height="36" fill="#111"/><rect x="171" y="0" width="1" height="36" fill="#111"/><rect x="173" y="0" width="1" height="36" fill="#111"/><rect x="176" y="0" width="3" height="36" fill="#111"/><rect x="180" y="0" width="1" height="36" fill="#111"/><rect x="183" y="0" width="3" height="36" fill="#111"/><rect x="189" y="0" width="3" height="36" fill="#111"/><rect x="194" y="0" width="1" height="36" fill="#111"/><rect x="197" y="0" width="3" height="36" fill="#111"/><rect x="202" y="0" width="1" height="36" fill="#111"/><rect x="205" y="0" width="1" height="36" fill="#111"/><rect x="207" y="0" width="2" height="36" fill="#111"/><rect x="210" y="0" width="2" height="36" fill="#111"/><rect x="213" y="0" width="1" height="36" fill="#111"/><rect x="216" y="0" width="1" height="36" fill="#111"/><rect x="218" y="0" width="2" height="36" fill="#111"/><rect x="222" y="0" width="2" height="36" fill="#111"/><rect x="225" y="0" width="1" height="36" fill="#111"/><rect x="228" y="0" width="2" height="36" fill="#111"/><rect x="233" y="0" width="1" height="36" fill="#111"/><rect x="235" y="0" width="2" height="36" fill="#111"/><rect x="240" y="0" width="1" height="36" fill="#111"/><rect x="243" y="0" width="1" height="36" fill="#111"/><rect x="246" y="0" width="1" height="36" fill="#111"/><rect x="248" y="0" width="1" height="36" fill="#111"/><rect x="250" y="0" width="1" height="36" fill="#111"/><rect x="252" y="0" width="3" height="36" fill="#111"/><rect x="256" y="0" width="1" height="36" fill="#111"/></svg>
<div class="t" style="left:804.0px;top:684.5px;font-size:7px;line-height:8px;color:#222;font-family:'Liberation Serif',serif;transform:scaleX(0.7035);transform-origin:0 0;">CHAVE DE ACESSO</div>
<div class="t" style="left:813.0px;top:693.0px;font-size:12px;line-height:14px;color:#111;font-weight:bold;font-family:'Liberation Serif',serif;transform:scaleX(0.9354);transform-origin:0 0;">1010 1010 1010 1010 1010 1010 1000 0000 1010 0000 1010</div>
<div class="t" style="left:826.0px;top:730.0px;font-size:12px;line-height:14px;color:#222;font-family:'Liberation Serif',serif;transform:scaleX(0.8125);transform-origin:0 0;">www.nfe.fazenda.gov.br/portal ou no site da Sefaz Autorizadora</div>
<div class="t" style="left:843.0px;top:716.5px;font-size:12px;line-height:14px;color:#222;font-family:'Liberation Serif',serif;transform:scaleX(0.8452);transform-origin:0 0;">Consulta de autenticidade no portal nacional da NF-e</div>
<div class="a" style="left:281px;top:734px;width:965px;height:21px;background:linear-gradient(#56607c 0px,#3c4662 6px,#141a30 8px,#1c2440 13px,#3a4870 21px)"></div>
<div class="t" style="left:283.9px;top:740.0px;font-size:11px;line-height:13px;color:#fff;letter-spacing:-0.434px;">Page 1 of 1</div>
<div class="a" style="left:1014px;top:734px;width:232px;height:21px;background:linear-gradient(#7a8a98,#1a3a62 35%,#1a3c66)"></div>
<div class="a" style="left:1018px;top:737px;width:62px;height:16px;background:linear-gradient(#fff,#e8ecf2);border-radius:3px;border:1px solid #9aa8b8"></div>
<div class="a" style="left:1022px;top:739px;width:14px;height:12px;background:linear-gradient(#d8e4f0,#a8b8c8);border:1px solid #8a9aaa"></div>
<div class="a" style="left:1042px;top:739px;width:14px;height:12px;background:linear-gradient(#d8e4f0,#a8b8c8);border:1px solid #8a9aaa"></div>
<div class="a" style="left:1062px;top:739px;width:14px;height:12px;background:linear-gradient(#d8e4f0,#a8b8c8);border:1px solid #8a9aaa"></div>
<div class="t" style="left:1084.9px;top:740.0px;font-size:11px;line-height:13px;color:#fff;letter-spacing:-0.219px;">100%</div>
<div class="a" style="left:1130px;top:744px;width:102px;height:2px;background:#b8c4d0"></div>
<svg style="left:1118px;top:738px" width="15" height="15" viewBox="0 0 15 15"><circle cx="7.5" cy="7.5" r="7" fill="#e8e8e8" stroke="#888"/><path d="M4 7.5h7" stroke="#555" stroke-width="2"/></svg>
<svg style="left:1228px;top:738px" width="15" height="15" viewBox="0 0 15 15"><circle cx="7.5" cy="7.5" r="7" fill="#e8e8e8" stroke="#888"/><path d="M4 7.5h7M7.5 4v7" stroke="#555" stroke-width="2"/></svg>
<svg style="left:1176px;top:738px" width="9" height="13" viewBox="0 0 9 13"><path d="M0.5 0.5h8v8l-4 4-4-4z" fill="#e8e8e8" stroke="#777"/></svg>
<div class="a" style="left:281px;top:755px;width:969px;height:6px;background:#fbfbfb"></div>
<svg style="left:212px;top:470px" width="70" height="40" viewBox="0 0 70 40"><path d="M1.7 19.5L50.6 10.1V0.8L68.7 19.5L50.6 38.6V28.9Z" fill="#f00"/></svg>
</body></html>
